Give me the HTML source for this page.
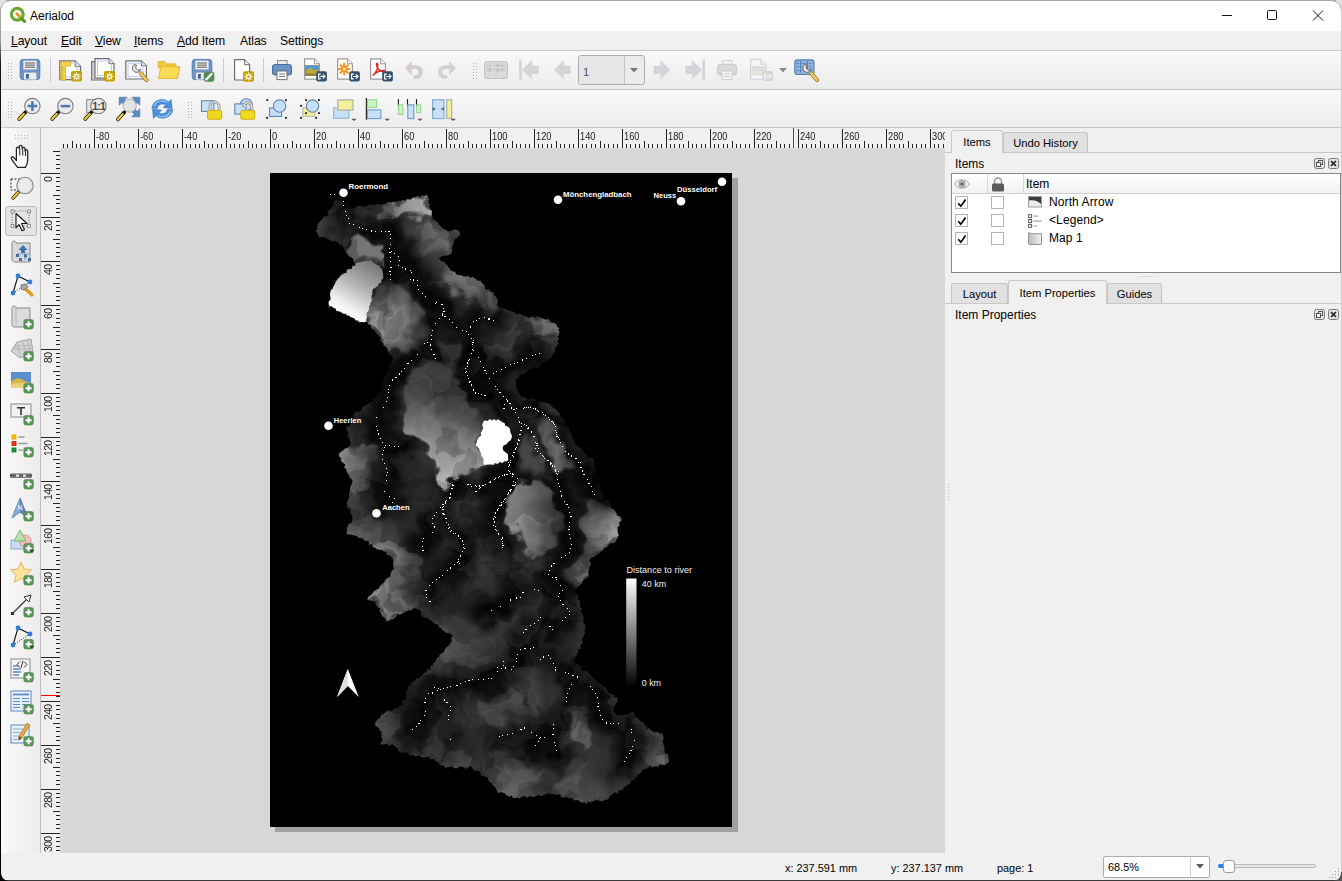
<!DOCTYPE html>
<html><head><meta charset="utf-8"><title>Aerialod</title>
<style>
html,body{margin:0;padding:0;}
body{width:1342px;height:881px;overflow:hidden;background:#f0f0f0;font-family:"Liberation Sans",sans-serif;font-size:12px;color:#000;position:relative;}
.abs{position:absolute;}
#title{left:0;top:0;width:1342px;height:31px;background:#fff;}
#title .name{left:30px;top:9px;font-size:12px;letter-spacing:0px;}
#menubar{left:0;top:31px;width:1342px;height:19px;background:#f0f0f0;}
#menubar span{position:absolute;top:3px;font-size:12.2px;letter-spacing:-0.1px;white-space:nowrap;}
#menubar u{text-decoration:underline;text-underline-offset:1px;}
.tb{left:1px;width:1341px;background:linear-gradient(#f9f9f9,#ececec);border-top:1px solid #c8c8c8;}
#tb1{top:50px;height:38px;}
#tb2{top:89px;height:38px;}
.grip{position:absolute;width:5px;height:17px;background-image:radial-gradient(circle,#b4b4b4 0.7px,transparent 0.9px);background-size:3px 3px;}
.sep{position:absolute;width:1px;height:24px;background:#c9c9c9;}
.ic{position:absolute;width:24px;height:24px;overflow:visible;}
#lefttb{left:1px;top:128px;width:39px;height:725px;background:linear-gradient(90deg,#f9f9f9,#ececec);border-right:1px solid #bdbdbd;}
#hruler{left:41px;top:128px;width:904px;height:20px;background:#f0f0f0;overflow:hidden;}
#vruler{left:41px;top:148px;width:19px;height:705px;background:#f0f0f0;overflow:hidden;}
#canvas{left:60px;top:148px;width:885px;height:705px;background:#d7d7d7;overflow:hidden;}
.rl{position:absolute;font-size:10.5px;color:#222;white-space:nowrap;}
#panel{left:945px;top:128px;width:397px;height:725px;background:#f0f0f0;}
.tab{position:absolute;box-sizing:border-box;border:1px solid #c4c4c4;border-bottom:none;border-radius:3px 3px 0 0;background:#e1e1e1;font-size:11.2px;text-align:center;white-space:nowrap;}
.cb{position:absolute;width:13px;height:13px;box-sizing:border-box;border:1px solid #b4b4b4;background:#fff;}
.ck{position:absolute;}
.tab.sel{background:#f0f0f0;border-color:#c9c9c9;}
#status{left:0;top:853px;width:1342px;height:28px;background:#f0f0f0;}
#status span{position:absolute;top:9px;font-size:10.9px;white-space:nowrap;}
</style></head><body>

<div id="title" class="abs">
<svg class="abs" style="left:8.7px;top:6.300px" width="18" height="18" viewBox="0 0 18 18"><circle cx="8.300" cy="8.300" r="5.900" fill="none" stroke="#6ea82e" stroke-width="3.200"/><path d="M10.500 10.500l5 4.800" stroke="#5b9a2d" stroke-width="3.200" stroke-linecap="round"/><path d="M7.600 7.600l3 2.900" stroke="#f08a1c" stroke-width="2.600" stroke-linecap="round"/><path d="M9.800 9.700l1.500 1.400" stroke="#c9c233" stroke-width="2.400"/></svg>
<div class="abs name">Aerialod</div>
<svg class="abs" style="left:1200px;top:0" width="142" height="31" viewBox="0 0 142 31"><path d="M22 15.500h10" stroke="#111" stroke-width="1"/><rect x="67.500" y="10.500" width="9" height="9" rx="1" fill="none" stroke="#111" stroke-width="1"/><path d="M113 10.500l10 10M123 10.500l-10 10" stroke="#111" stroke-width="1"/></svg>
</div>
<div id="menubar" class="abs">
<span style="left:11px"><u>L</u>ayout</span>
<span style="left:61px"><u>E</u>dit</span>
<span style="left:95px"><u>V</u>iew</span>
<span style="left:134px"><u>I</u>tems</span>
<span style="left:177px"><u>A</u>dd Item</span>
<span style="left:240px">Atlas</span>
<span style="left:280px">Settings</span>
</div>
<div id="tb1" class="abs tb">
<div class="grip" style="left:6px;top:11px"></div>
<svg class="ic" style="left:17px;top:7px" width="24" height="24" viewBox="0 0 24 24"><rect x="2.200" y="1.400" width="19.600" height="20.200" rx="2.800" fill="#6f93c4" stroke="#5580b5" stroke-width="1"/><rect x="5.400" y="2.800" width="13.200" height="8.600" fill="#f2f2f2" stroke="#b9c3d0" stroke-width="0.500"/><path d="M7 5h10M7 7.100h10M7 9.200h10" stroke="#555" stroke-width="1"/><rect x="6" y="14.600" width="12.400" height="7" fill="#ececec"/><rect x="8" y="16" width="2.800" height="4.600" fill="#3d5f8f"/></svg>
<svg class="ic" style="left:57px;top:7px" width="24" height="24" viewBox="0 0 24 24"><path d="M1.8 2.9H17.1L22.6 8.4V21.6H1.8z" fill="#fff" stroke="#6d6d6d" stroke-width="1.200" stroke-linejoin="round"/><path d="M17.1 2.9V8.4H22.6" fill="#f0f0f0" stroke="#6d6d6d" stroke-width="1"/><rect x="5" y="5" width="14" height="14" fill="none" stroke="#b4c0f2" stroke-width="0.900"/><path d="M3 4h9.500v4H7.500v14H3z" fill="#f7d548" stroke="#d9b416" stroke-width="0.900"/><path d="M3 10h2.500M3 12.500h2.500M3 15h2.500M3 17.500h2.500M3 20h2.500" stroke="#c4a000" stroke-width="0.800"/><rect x="13" y="13" width="11" height="10.6" rx="2" fill="#c4a000"/><path d="M18.5 14.3v8M14.3 18.5h8.4M15.6 15.6l5.800 5.800M21.4 15.6l-5.800 5.800" stroke="#fbf3cf" stroke-width="1.200"/><circle cx="18.5" cy="18.5" r="2.500" fill="#fbf3cf"/><circle cx="18.5" cy="18.5" r="1.100" fill="#c4a000"/></svg>
<svg class="ic" style="left:90px;top:7px" width="24" height="24" viewBox="0 0 24 24"><path d="M0.600 3.600h4v16h12v2.400h-16z" fill="#cfcfcf" stroke="#777" stroke-width="1.200" stroke-linejoin="round"/><path d="M4 0.6H18L23 5.6V20H4z" fill="#fff" stroke="#6d6d6d" stroke-width="1.200" stroke-linejoin="round"/><path d="M18 0.6V5.6H23" fill="#f0f0f0" stroke="#6d6d6d" stroke-width="1"/><rect x="6.500" y="3" width="14" height="14.500" fill="none" stroke="#b4c0f2" stroke-width="0.900"/><rect x="13" y="13" width="11" height="10.6" rx="2" fill="#c4a000"/><path d="M18.5 14.3v8M14.3 18.5h8.4M15.6 15.6l5.800 5.800M21.4 15.6l-5.800 5.800" stroke="#fbf3cf" stroke-width="1.200"/><circle cx="18.5" cy="18.5" r="2.500" fill="#fbf3cf"/><circle cx="18.5" cy="18.5" r="1.100" fill="#c4a000"/></svg>
<svg class="ic" style="left:123px;top:7px" width="24" height="24" viewBox="0 0 24 24"><path d="M1.8 2.9H17.4L22.4 7.9V21H1.8z" fill="#fff" stroke="#6d6d6d" stroke-width="1.200" stroke-linejoin="round"/><path d="M17.4 2.9V7.9H22.4" fill="#f0f0f0" stroke="#6d6d6d" stroke-width="1"/><rect x="4" y="5.200" width="15" height="13.500" fill="none" stroke="#b4c0f2" stroke-width="0.900"/><g transform="translate(2 1.5)"><path d="M20.500 20.500l-5.500-6.500" stroke="#8f6f1c" stroke-width="4.200" stroke-linecap="round"/><path d="M20.400 20.400l-5.500-6.500" stroke="#ecca66" stroke-width="2.800" stroke-linecap="round"/><path d="M8 5.200a4.300 4.300 0 1 0 6.800 4.600l-2.900 1-2.300-2.300 0.800-3a4.300 4.300 0 0 0-2.400-0.300z" fill="#e6e6e6" stroke="#666" stroke-width="1"/></g></svg>
<svg class="ic" style="left:156px;top:7px" width="24" height="24" viewBox="0 0 24 24"><path d="M1.200 3.500h6.500l1.800 2.400h9.300v4H1.200z" fill="#f3c93c" stroke="#dcb22a" stroke-width="0.900" stroke-linejoin="round"/><path d="M4 8.600h19l-2.600 12H1.400z" fill="#fcda55" stroke="#dcb22a" stroke-width="0.900" stroke-linejoin="round"/></svg>
<svg class="ic" style="left:189px;top:7px" width="24" height="24" viewBox="0 0 24 24"><rect x="2.200" y="1.400" width="19.600" height="20.200" rx="2.800" fill="#6f93c4" stroke="#5580b5" stroke-width="1"/><rect x="5.400" y="2.800" width="13.200" height="8.600" fill="#f2f2f2" stroke="#b9c3d0" stroke-width="0.500"/><path d="M7 5h10M7 7.100h10M7 9.200h10" stroke="#555" stroke-width="1"/><rect x="6" y="14.600" width="12.400" height="7" fill="#ececec"/><rect x="8" y="16" width="2.800" height="4.600" fill="#3d5f8f"/><rect x="14" y="14" width="10" height="9.600" rx="2" fill="#528f55" stroke="#4a7f4a" stroke-width="0.500"/><path d="M16.300 21.300l5.300-5.300" stroke="#fff" stroke-width="2.400" stroke-linecap="round"/></svg>
<svg class="ic" style="left:230px;top:7px" width="24" height="24" viewBox="0 0 24 24"><path d="M3.6 1.7H13.600000000000001L18.6 6.7V22H3.6z" fill="#fff" stroke="#6d6d6d" stroke-width="1.200" stroke-linejoin="round"/><path d="M13.600000000000001 1.7V6.7H18.6" fill="#f0f0f0" stroke="#6d6d6d" stroke-width="1"/><rect x="12" y="13.2" width="11" height="10.6" rx="2" fill="#c4a000"/><path d="M17.5 14.5v8M13.3 18.7h8.4M14.6 15.799999999999999l5.800 5.800M20.4 15.799999999999999l-5.800 5.800" stroke="#fbf3cf" stroke-width="1.200"/><circle cx="17.5" cy="18.7" r="2.500" fill="#fbf3cf"/><circle cx="17.5" cy="18.7" r="1.100" fill="#c4a000"/></svg>
<svg class="ic" style="left:269px;top:7px" width="24" height="24" viewBox="0 0 24 24"><rect x="7.600" y="2.500" width="9.400" height="6.500" fill="#ececec" stroke="#8a8a8a" stroke-width="1"/><rect x="2.500" y="6.500" width="19" height="10.500" rx="3" fill="#6b94c6" stroke="#44709f" stroke-width="1.100"/><path d="M6.500 17v-4.300h11V17" fill="#3f5f86" /><rect x="7" y="13" width="10" height="8.600" fill="#fbfbfb" stroke="#777" stroke-width="1"/><path d="M9 16h6M9 18.500h6" stroke="#777" stroke-width="1"/></svg>
<svg class="ic" style="left:302px;top:7px" width="24" height="24" viewBox="0 0 24 24"><path d="M1.6 0.8H11.399999999999999L16.4 5.8V21.2H1.6z" fill="#fff" stroke="#999" stroke-width="1.200" stroke-linejoin="round"/><path d="M11.399999999999999 0.8V5.8H16.4" fill="#f0f0f0" stroke="#999" stroke-width="1"/><rect x="2.400" y="7.500" width="13" height="10" fill="#4a9be0"/><path d="M2.400 17.500v-4.800l4.500-3 5 2.300 3.500-0.500v6z" fill="#bfa53c"/><path d="M2.400 17.500v-2h13v2z" fill="#9c8426"/><rect x="2.400" y="7.500" width="13" height="10" fill="none" stroke="#777" stroke-width="0.700"/><rect x="13.2" y="13.2" width="10.700" height="10.400" rx="2" fill="#34526b"/><path d="M17.799999999999997 16.2h-2.200v4.600h2.200M17.2 18.5h4.500M19.9 16.4l2.100 2.100-2.100 2.100" stroke="#fff" stroke-width="1.200" fill="none"/></svg>
<svg class="ic" style="left:335px;top:7px" width="24" height="24" viewBox="0 0 24 24"><path d="M1.6 0.8H11.399999999999999L16.4 5.8V21.2H1.6z" fill="#fff" stroke="#999" stroke-width="1.200" stroke-linejoin="round"/><path d="M11.399999999999999 0.8V5.8H16.4" fill="#f0f0f0" stroke="#999" stroke-width="1"/><path d="M8.200 5.500v11M3 11h10.400M4.500 7.200l7.400 7.600M11.900 7.200l-7.400 7.600" stroke="#f7931e" stroke-width="2" stroke-linecap="round"/><circle cx="8.200" cy="11" r="1.300" fill="#fff"/><rect x="13.2" y="13.2" width="10.700" height="10.400" rx="2" fill="#34526b"/><path d="M17.799999999999997 16.2h-2.200v4.600h2.200M17.2 18.5h4.500M19.9 16.4l2.100 2.100-2.100 2.100" stroke="#fff" stroke-width="1.200" fill="none"/></svg>
<svg class="ic" style="left:368px;top:7px" width="24" height="24" viewBox="0 0 24 24"><path d="M1.6 0.8H11.399999999999999L16.4 5.8V21.2H1.6z" fill="#fff" stroke="#999" stroke-width="1.200" stroke-linejoin="round"/><path d="M11.399999999999999 0.8V5.8H16.4" fill="#f0f0f0" stroke="#999" stroke-width="1"/><path d="M3.500 17.500c3.500-2.500 5.800-8 5.300-11.300-0.200-1.400-1.700-1-1.400 0.800 0.700 3.400 3.800 6.400 7 6.800 1.900 0.200 1.800-1.300 0-1.300-3.600 0-7.700 2-10.900 5z" fill="none" stroke="#e2231a" stroke-width="1.300"/><rect x="13.2" y="13.2" width="10.700" height="10.400" rx="2" fill="#34526b"/><path d="M17.799999999999997 16.2h-2.200v4.600h2.200M17.2 18.5h4.500M19.9 16.4l2.100 2.100-2.100 2.100" stroke="#fff" stroke-width="1.200" fill="none"/></svg>
<svg class="ic" style="left:401px;top:7px" width="24" height="24" viewBox="0 0 24 24"><path d="M3.100 10.100L9.800 3v4.200h3c5 0 8.200 2.400 8.200 6.800 0 4-3 6.800-7 6.800h-2.200v-3.600h1.700c2 0 3.200-1.300 3.200-3.100 0-2-1.500-3.200-4-3.200H9.800v6.600z" fill="#d5cec9"/></svg>
<svg class="ic" style="left:434px;top:7px" width="24" height="24" viewBox="0 0 24 24"><path d="M20.900 10.100L14.200 3v4.200h-3c-5 0-8.200 2.400-8.200 6.800 0 4 3 6.800 7 6.800h2.200v-3.600h-1.700c-2 0-3.200-1.300-3.200-3.100 0-2 1.500-3.200 4-3.200h2.900v6.600z" fill="#cfd3d1"/></svg>
<svg class="ic" style="left:483px;top:7px" width="24" height="24" viewBox="0 0 24 24"><rect x="0.600" y="3.500" width="22.800" height="17" rx="3" fill="#d6d7d9" stroke="#c2c4c7" stroke-width="1.100"/><path d="M3 8l3-1 3 1 1 3-2 1-1 4-2-3-2-2zM11 7l4-1 5 1 1 3-2 3-3 1-1 3-2-2-1-4z" fill="#c3c5c8"/><path d="M1 9.500h22M1 15h22M8 3.500v17M16 3.500v17" stroke="#e6e7e9" stroke-width="0.800"/></svg>
<svg class="ic" style="left:517px;top:7px" width="24" height="24" viewBox="0 0 24 24"><rect x="1.100" y="1.400" width="2.700" height="20.800" rx="0.500" fill="#d3d5d8"/><path d="M4 11.900l10.100-9.900v5.800h6.700v8.300h-6.700v5.400z" fill="#d3d5d8"/></svg>
<svg class="ic" style="left:550px;top:7px" width="24" height="24" viewBox="0 0 24 24"><path d="M3 11.900l9.900-9.900v5.800h6.700v8.300h-6.700v5.400z" fill="#d3d5d8"/></svg>
<svg class="ic" style="left:648px;top:7px" width="24" height="24" viewBox="0 0 24 24"><path d="M21.300 11.900l-9.900-9.900v5.800H4.700v8.300h6.700v5.400z" fill="#d3d5d8"/></svg>
<svg class="ic" style="left:681px;top:7px" width="24" height="24" viewBox="0 0 24 24"><rect x="20.300" y="1.400" width="2.700" height="20.800" rx="0.500" fill="#d3d5d8"/><path d="M20 11.900l-10.100-9.900v5.800H3.300v8.300h6.700v5.400z" fill="#d3d5d8"/></svg>
<svg class="ic" style="left:714px;top:7px" width="24" height="24" viewBox="0 0 24 24"><rect x="7.600" y="2.500" width="9.400" height="6.500" fill="#f1f1f1" stroke="#d0d1d3" stroke-width="1"/><rect x="2.500" y="6.500" width="19" height="10.500" rx="3" fill="#d6d8da" stroke="#cacbce" stroke-width="1.100"/><rect x="7" y="13" width="10" height="8.600" fill="#f4f4f4" stroke="#cfd0d2" stroke-width="1"/><path d="M9 16h6M9 18.500h6" stroke="#cfd0d2" stroke-width="1"/></svg>
<svg class="ic" style="left:748px;top:7px" width="24" height="24" viewBox="0 0 24 24"><path d="M1.6 1.3H11.8L16.8 6.3V21.2H1.6z" fill="#f6f6f6" stroke="#d4d5d7" stroke-width="1.200" stroke-linejoin="round"/><path d="M11.8 1.3V6.3H16.8" fill="#f0f0f0" stroke="#d4d5d7" stroke-width="1"/><rect x="2.400" y="8" width="13.600" height="9.500" fill="#dcdddf"/><path d="M2.400 17.500v-4l5-1.500 8.600 1.500v4z" fill="#e6e4dc"/><rect x="13.200" y="13" width="10.800" height="10" rx="2" fill="#d3d5d8"/><path d="M17.800 16h-2.200v4.600h2.200M17.200 18.300h4.500M19.900 16.200l2.100 2.100-2.100 2.100" stroke="#f6f6f6" stroke-width="1.200" fill="none"/></svg>
<svg class="ic" style="left:793px;top:7px" width="24" height="24" viewBox="0 0 24 24"><rect x="0.800" y="1.900" width="19.200" height="14.600" rx="2.500" fill="#8fb3dd" stroke="#4f7fb8" stroke-width="1.100"/><path d="M2.500 5.500h16M2.500 9h16M2.500 12.500h16M6.500 3v12.500M13.500 3v12.500" stroke="#3f6ea6" stroke-width="0.800" stroke-dasharray="2 1.200"/><g transform="translate(2.5 1.5)"><path d="M20.500 20.500l-5.500-6.500" stroke="#8f6f1c" stroke-width="4.200" stroke-linecap="round"/><path d="M20.400 20.400l-5.500-6.500" stroke="#ecca66" stroke-width="2.800" stroke-linecap="round"/><path d="M8 5.200a4.300 4.300 0 1 0 6.800 4.600l-2.900 1-2.300-2.300 0.800-3a4.300 4.300 0 0 0-2.400-0.300z" fill="#e6e6e6" stroke="#666" stroke-width="1"/></g></svg>
<div class="sep" style="left:49px;top:7px"></div>
<div class="sep" style="left:222px;top:7px"></div>
<div class="sep" style="left:262px;top:7px"></div>
<div class="grip" style="left:471px;top:11px"></div>
<div class="abs" style="left:577px;top:4px;width:67px;height:30px;box-sizing:border-box;border:1px solid #adadad;border-radius:3px;background:#ececec;"><div class="abs" style="left:0;top:0;width:45px;height:28px;border-right:1px solid #c2c2c2;background:#e6e6e6;border-radius:3px 0 0 3px"></div><span class="abs" style="left:4px;top:10px;font-size:11px;color:#555">1</span><svg class="abs" style="left:51px;top:12px" width="9" height="5"><path d="M0 0h8l-4 4.500z" fill="#777"/></svg></div>
<svg class="abs" style="left:778px;top:17px" width="9" height="5"><path d="M0 0h8l-4 4.500z" fill="#8a8a8a"/></svg>
</div>
<div id="tb2" class="abs tb">
<div class="grip" style="left:6px;top:11px"></div>
<svg class="ic" style="left:17px;top:7px" width="24" height="24" viewBox="0 0 24 24"><path d="M1.200 22l6.300-6.900" stroke="#111" stroke-width="3.600" stroke-linecap="round"/><path d="M1.200 22l4.600-5" stroke="#f4c531" stroke-width="2.300" stroke-linecap="round"/><circle cx="14.400" cy="9.100" r="7.700" fill="#ececec" stroke="#7c7c7c" stroke-width="1.100"/><path d="M14.400 4.300v9.600M9.600 9.100h9.600" stroke="#4a7ab5" stroke-width="2.500"/></svg>
<svg class="ic" style="left:50px;top:7px" width="24" height="24" viewBox="0 0 24 24"><path d="M1.200 22l6.300-6.900" stroke="#111" stroke-width="3.600" stroke-linecap="round"/><path d="M1.200 22l4.600-5" stroke="#f4c531" stroke-width="2.300" stroke-linecap="round"/><circle cx="14.400" cy="9.100" r="7.700" fill="#ececec" stroke="#7c7c7c" stroke-width="1.100"/><path d="M9.600 9.100h9.600" stroke="#4a7ab5" stroke-width="2.500"/></svg>
<svg class="ic" style="left:83px;top:7px" width="24" height="24" viewBox="0 0 24 24"><rect x="2.700" y="2.600" width="9" height="13" fill="#e3e3e3" stroke="#8a8a8a" stroke-width="1"/><path d="M1.200 22l6.300-6.900" stroke="#111" stroke-width="3.600" stroke-linecap="round"/><path d="M1.200 22l4.600-5" stroke="#f4c531" stroke-width="2.300" stroke-linecap="round"/><circle cx="14.400" cy="9.100" r="7.700" fill="#ececec" stroke="#7c7c7c" stroke-width="1.100"/><text x="14.600" y="12.600" font-size="10.500" font-weight="bold" text-anchor="middle" fill="#444" font-family="Liberation Sans, sans-serif" letter-spacing="-0.900">1:1</text></svg>
<svg class="ic" style="left:116px;top:7px" width="24" height="24" viewBox="0 0 24 24"><path d="M2.200 0.200h8l-2.600 2.600 3 3-2.800 2.800-3-3-2.600 2.600zM22.800 0.200v8l-2.600-2.600-3 3-2.800-2.800 3-3-2.600-2.600zM22.800 19.800h-8l2.600-2.600-3-3 2.800-2.800 3 3 2.600-2.600zM2.200 19.800" fill="#5b8ac4" stroke="#3f6ea8" stroke-width="0.600"/><circle cx="12.700" cy="8.600" r="6.600" fill="#e4e4e4" stroke="#a4a4a4" stroke-width="0.900"/><path d="M0.800 22.500l6.500-7.200" stroke="#111" stroke-width="3.600" stroke-linecap="round"/><path d="M0.800 22.500l4.800-5.300" stroke="#f4c531" stroke-width="2.300" stroke-linecap="round"/></svg>
<svg class="ic" style="left:149px;top:7px" width="24" height="24" viewBox="0 0 24 24"><path d="M1.800 11.300a10.200 10.200 0 0 1 16.800-6.300l2.500-2.600 1 9-9-0.800 2.500-2.600a5.200 5.200 0 0 0-8.300 3.300z" fill="#4a8fdc" stroke="#2e6fba" stroke-width="0.600"/><path d="M22.800 12.400a10.200 10.200 0 0 1-16.800 6.300l-2.500 2.600-1-9 9 0.800-2.500 2.600a5.200 5.200 0 0 0 8.300-3.300z" fill="#4a8fdc" stroke="#2e6fba" stroke-width="0.600"/><path d="M4 9.500a8.500 8.500 0 0 1 13-4M20.500 14.200a8.500 8.500 0 0 1-13 4" stroke="#9cc6f2" stroke-width="1.300" fill="none"/></svg>
<svg class="ic" style="left:198px;top:7px" width="24" height="24" viewBox="0 0 24 24"><rect x="2.500" y="3.800" width="12.500" height="10.600" fill="#c6e0f7" stroke="#5d86b4" stroke-width="1.100"/><path d="M11 13.500v-4a4.500 4.500 0 0 1 9 0v4" fill="none" stroke="#8d8d8d" stroke-width="2.800"/><path d="M11 13.500v-4a4.500 4.500 0 0 1 9 0v4" fill="none" stroke="#dcdcdc" stroke-width="1.400"/><rect x="8.600" y="13.600" width="14" height="8.600" rx="1.200" fill="#f1d821" stroke="#cfae08" stroke-width="1"/></svg>
<svg class="ic" style="left:231px;top:7px" width="24" height="24" viewBox="0 0 24 24"><circle cx="14.300" cy="7.700" r="6" fill="#c6e0f7" stroke="#5d86b4" stroke-width="1.100"/><rect x="2.800" y="6.900" width="11" height="10.200" fill="#c6e0f7" stroke="#5d86b4" stroke-width="1.100"/><path d="M20 13.500v-3.500a4.300 4.300 0 0 0-8.300-1.500l2.500 1" fill="none" stroke="#8d8d8d" stroke-width="2.800"/><path d="M20 13.500v-3.500a4.300 4.300 0 0 0-8.300-1.500l2.500 1" fill="none" stroke="#dcdcdc" stroke-width="1.400"/><rect x="8.800" y="13.600" width="14" height="8.600" rx="1.200" fill="#f1d821" stroke="#cfae08" stroke-width="1"/></svg>
<svg class="ic" style="left:264px;top:7px" width="24" height="24" viewBox="0 0 24 24"><rect x="4.600" y="10.900" width="12" height="8.500" fill="#c6e0f7" stroke="#5d86b4" stroke-width="1.100"/><circle cx="14.600" cy="9.100" r="6.200" fill="#c6e0f7" stroke="#5d86b4" stroke-width="1.100"/><path d="M1.300 2.200h1.800v1.800H1.300zM20 2.200h1.800v1.800H20zM1.300 20h1.800v1.800H1.300zM20 20h1.800v1.800H20z" fill="#111"/></svg>
<svg class="ic" style="left:297px;top:7px" width="24" height="24" viewBox="0 0 24 24"><rect x="4.900" y="10.900" width="12" height="8.300" fill="#f4f09a" stroke="#b9b68a" stroke-width="1"/><circle cx="14.500" cy="9.100" r="6.200" fill="#c6e0f7" stroke="#5d86b4" stroke-width="1.100"/><path d="M7.200 2.200h1.800v1.800H7.200zM20 2.200h1.800v1.800H20zM2.200 8h1.800v1.800H2.200zM7.200 15.200h1.800v1.800H7.200zM20 15.200h1.800v1.800H20zM2.200 20h1.800v1.800H2.200zM17.200 20h1.800v1.800h-1.800z" fill="#111"/></svg>
<svg class="ic" style="left:330px;top:7px" width="24" height="24" viewBox="0 0 24 24"><rect x="2.700" y="10.900" width="15.200" height="10.300" fill="#c6e0f7" stroke="#8fb0d4" stroke-width="1.100"/><rect x="6.800" y="2.900" width="15.200" height="10.200" fill="#f4f09a" stroke="#a9a9a0" stroke-width="1.100"/><path d="M20.300 21.800h5.400l-2.700 2.300z" fill="#555"/></svg>
<svg class="ic" style="left:363px;top:7px" width="24" height="24" viewBox="0 0 24 24"><path d="M2.400 1.100v21.600" stroke="#222" stroke-width="1.200"/><rect x="3.400" y="2.800" width="9.300" height="7.600" fill="#c8f5c0" stroke="#97cf90" stroke-width="1"/><rect x="3.400" y="12.900" width="13.500" height="8.700" fill="#c6e0f7" stroke="#6f9bc8" stroke-width="1.100"/><path d="M20.500 21.800h5.400l-2.700 2.300z" fill="#555"/></svg>
<svg class="ic" style="left:396px;top:7px" width="24" height="24" viewBox="0 0 24 24"><path d="M1.400 2v7.800M10.500 2v7.800M19.500 2v7.800" stroke="#222" stroke-width="1.100"/><rect x="1.600" y="7.800" width="4.300" height="9.700" fill="#c8f5c0" stroke="#97cf90" stroke-width="1"/><rect x="10.800" y="7.800" width="6" height="13.800" fill="#c6e0f7" stroke="#6f9bc8" stroke-width="1.100"/><rect x="19.700" y="7.800" width="4" height="7.800" fill="#c8f5c0" stroke="#97cf90" stroke-width="1"/><path d="M20.300 21.800h5.400l-2.700 2.300z" fill="#555"/></svg>
<svg class="ic" style="left:429px;top:7px" width="24" height="24" viewBox="0 0 24 24"><rect x="2.600" y="2.800" width="11.400" height="18.800" fill="#c6e0f7" stroke="#7fa8d2" stroke-width="1.100"/><path d="M2.600 10l3.200 2-3.200 2zM14 10l-3.200 2 3.200 2z" fill="#5c6d80"/><path d="M2.600 12h2M14 12h-2" stroke="#5c6d80" stroke-width="0.800"/><rect x="16.700" y="2.800" width="5" height="18.500" fill="#f4f09a" stroke="#a9a9a0" stroke-width="1.100"/><path d="M20.300 21.800h5.700l-2.850 2.300z" fill="#555"/></svg>
<div class="grip" style="left:186px;top:11px"></div>
</div>
<div class="abs" style="left:0;top:127px;width:1342px;height:1px;background:#c8c8c8"></div>
<div id="lefttb" class="abs">
<div class="abs" style="left:13px;top:6px;width:14px;height:5px;background-image:radial-gradient(circle,#b4b4b4 0.7px,transparent 0.9px);background-size:3px 3px;"></div>
<div class="abs" style="left:4px;top:78px;width:32px;height:30px;box-sizing:border-box;border:1px solid #b9b9b9;border-radius:3px;background:#e4e4e4"></div>
<svg class="ic" style="left:9px;top:16px" width="24" height="24" viewBox="0 0 24 24"><g transform="translate(-1.5 -1.5) scale(1.13)"><path d="M8 22c-2-3-5-6-5.5-8-0.3-1.3 1.5-1.8 2.5-0.500l2 2.500V5.500c0-1.8 2.5-1.8 2.5 0V4c0-1.8 2.6-1.8 2.6 0v1.500c0-1.6 2.5-1.6 2.5 0v2c0-1.5 2.4-1.5 2.4 0v8c0 3-1 4.5-2 6.500z" fill="#fff" stroke="#222" stroke-width="1.1" stroke-linejoin="round"/><path d="M10 5.500v6M12.6 5.500v6M15.1 7v5" stroke="#222" stroke-width="0.9"/></g></svg>
<svg class="ic" style="left:9px;top:48px" width="24" height="24" viewBox="0 0 24 24"><rect x="1" y="3" width="11" height="11" fill="none" stroke="#222" stroke-width="1" stroke-dasharray="2 1.5"/><path d="M3 22l6-6.5" stroke="#222" stroke-width="3.4" stroke-linecap="round"/><path d="M3 22l5-5.4" stroke="#f2c230" stroke-width="2.2" stroke-linecap="round"/><circle cx="15" cy="9.5" r="8.200" fill="#e2e2e2" stroke="#8a8a8a" stroke-width="1.100"/><circle cx="15" cy="9.500" r="6.500" fill="#ececec"/></svg>
<svg class="ic" style="left:9px;top:81px" width="24" height="24" viewBox="0 0 24 24"><rect x="2" y="2" width="17" height="15" fill="none" stroke="#555" stroke-width="0.9" stroke-dasharray="1 1.6"/><path d="M1 1h3v3H1zM17.5 1h3v3h-3zM1 15.500h3v3H1zM17.5 15.500h3v3h-3z" fill="#f4f4f4" stroke="#666" stroke-width="0.7"/><path d="M6 4.500l11 10h-5.500l3 6-2.5 1.2-3-6.2-3 3.500z" fill="#fff" stroke="#111" stroke-width="1.1" stroke-linejoin="round"/></svg>
<svg class="ic" style="left:9px;top:112px" width="24" height="24" viewBox="0 0 24 24"><path d="M4 1c-2 0-2 2-2 3v15c0 2 1 3 3 3h15V3H6c0-1-1-2-2-2z" fill="#d9d9d9" stroke="#888" stroke-width="1"/><path d="M13 5l4.5 5h-2.500v3h-4v-3h-2.500z" fill="#3e70b0"/><path d="M9 18h3v3H9zM14 14.500h3v3h-3zM18 18h3v3h-3zM6 14h3v3H6z" fill="#3e70b0"/><path d="M7 14h8v6M15 14h5" stroke="#3e70b0" stroke-width="0.8" fill="none" stroke-dasharray="1.5 1"/></svg>
<svg class="ic" style="left:9px;top:145px" width="24" height="24" viewBox="0 0 24 24"><path d="M8 3l12 6M8 3l-5 17" stroke="#111" stroke-width="1.1"/><path d="M3 20l17-11" stroke="#333" stroke-width="0.9" stroke-dasharray="1.2 1.2"/><path d="M22 22l-7-6.5" stroke="#e39a12" stroke-width="3.2" stroke-linecap="round"/><path d="M11 12l5-1 2 3-4 3-3-1z" fill="#aaa" stroke="#666" stroke-width="0.8"/><circle cx="8" cy="3" r="2.4" fill="#2f7de1"/><circle cx="20" cy="9" r="2.4" fill="#2f7de1"/><circle cx="3" cy="20" r="2.4" fill="#2f7de1"/></svg>
<svg class="ic" style="left:9px;top:177px" width="24" height="24" viewBox="0 0 24 24"><path d="M4 1c-2 0-2 2-2 3v15c0 2 1 3 3 3h15V3H6c0-1-1-2-2-2z" fill="#dcdcdc" stroke="#8a8a8a" stroke-width="1"/><path d="M6 3v17" stroke="#aaa" stroke-width="0.8"/><rect x="13.800" y="14.400" width="9.600" height="9.600" rx="2" fill="#5b955b" stroke="#4f844f" stroke-width="0.600"/><path d="M18.600 16.200v6M15.600 19.200h6" stroke="#fff" stroke-width="1.900"/></svg>
<svg class="ic" style="left:9px;top:209px" width="24" height="24" viewBox="0 0 24 24"><path d="M1 14l6-9 14-3 2 13-13 6z" fill="#d4d4d4" stroke="#9a9a9a" stroke-width="0.9"/><path d="M4 9.500l18-1.500M2.5 12l20 0M7 5l4 16M12 4l5 14M17 3l3 13" stroke="#aaa" stroke-width="0.7" fill="none"/><rect x="13.800" y="14.400" width="9.600" height="9.600" rx="2" fill="#5b955b" stroke="#4f844f" stroke-width="0.600"/><path d="M18.600 16.200v6M15.600 19.200h6" stroke="#fff" stroke-width="1.900"/></svg>
<svg class="ic" style="left:9px;top:241px" width="24" height="24" viewBox="0 0 24 24"><rect x="1" y="3" width="20" height="16" fill="#5d8fd0"/><path d="M1 19v-6c4-4 8-5 12-2 3 2 6 3 8 3v5z" fill="#d6b64a"/><path d="M1 19v-3c5-3 12-3 20 0v3z" fill="#e8cf7a"/><rect x="13.800" y="14.400" width="9.600" height="9.600" rx="2" fill="#5b955b" stroke="#4f844f" stroke-width="0.600"/><path d="M18.600 16.200v6M15.600 19.200h6" stroke="#fff" stroke-width="1.900"/></svg>
<svg class="ic" style="left:9px;top:273px" width="24" height="24" viewBox="0 0 24 24"><rect x="1" y="3" width="20" height="13" fill="#f2f2f2" stroke="#888" stroke-width="1"/><path d="M7 6h8v1.500h-3.200V14h-1.600V7.500H7z" fill="#333"/><rect x="13.800" y="14.400" width="9.600" height="9.600" rx="2" fill="#5b955b" stroke="#4f844f" stroke-width="0.600"/><path d="M18.600 16.200v6M15.600 19.200h6" stroke="#fff" stroke-width="1.900"/></svg>
<svg class="ic" style="left:9px;top:305px" width="24" height="24" viewBox="0 0 24 24"><rect x="2" y="2" width="4" height="4" fill="#f5c211" stroke="#e09b00" stroke-width="0.8"/><rect x="2" y="8.5" width="4" height="4" fill="#e5391f" stroke="#c01c00" stroke-width="0.8"/><rect x="2" y="15" width="4" height="4" fill="#1a9a4a" stroke="#0d6e30" stroke-width="0.8"/><path d="M8.5 4h6M8.5 10.500h9M8.5 17h4" stroke="#999" stroke-width="1.4"/><rect x="13.800" y="14.400" width="9.600" height="9.600" rx="2" fill="#5b955b" stroke="#4f844f" stroke-width="0.600"/><path d="M18.600 16.200v6M15.600 19.200h6" stroke="#fff" stroke-width="1.900"/></svg>
<svg class="ic" style="left:9px;top:337px" width="24" height="24" viewBox="0 0 24 24"><rect x="0.500" y="9" width="21" height="3.200" rx="1" fill="#e8e8e8" stroke="#555" stroke-width="1.100"/><rect x="1" y="9.500" width="5" height="2.200" fill="#555"/><rect x="9" y="9.500" width="4" height="2.200" fill="#555"/><rect x="16" y="9.500" width="5" height="2.200" fill="#555"/><rect x="13.800" y="14.400" width="9.600" height="9.600" rx="2" fill="#5b955b" stroke="#4f844f" stroke-width="0.600"/><path d="M18.600 16.200v6M15.600 19.200h6" stroke="#fff" stroke-width="1.900"/></svg>
<svg class="ic" style="left:9px;top:369px" width="24" height="24" viewBox="0 0 24 24"><path d="M10 1l8 20-8-6-8 6z" fill="#5a86bd" stroke="#3b6496" stroke-width="0.8"/><path d="M10 1v14l-8 6z" fill="#86a9d4"/><text x="10" y="13" font-size="7" fill="#dfe9f5" text-anchor="middle" font-family="Liberation Sans, sans-serif" font-weight="bold">N</text><rect x="13.800" y="14.400" width="9.600" height="9.600" rx="2" fill="#5b955b" stroke="#4f844f" stroke-width="0.600"/><path d="M18.600 16.200v6M15.600 19.200h6" stroke="#fff" stroke-width="1.900"/></svg>
<svg class="ic" style="left:9px;top:401px" width="24" height="24" viewBox="0 0 24 24"><rect x="1" y="11" width="13" height="9" fill="#c9dcf3" stroke="#7ea6d6" stroke-width="0.9"/><circle cx="15" cy="12" r="6" fill="#f4bcbc" stroke="#e08a8a" stroke-width="0.9"/><path d="M10 1l6 11H4z" fill="#b5e3ae" stroke="#6fb36a" stroke-width="0.9"/><rect x="13.800" y="14.400" width="9.600" height="9.600" rx="2" fill="#5b955b" stroke="#4f844f" stroke-width="0.600"/><path d="M18.600 16.200v6M15.600 19.200h6" stroke="#fff" stroke-width="1.900"/><path d="M20 21h4l-2 2.500z" fill="#333"/></svg>
<svg class="ic" style="left:9px;top:433px" width="24" height="24" viewBox="0 0 24 24"><path d="M11 1l3 7 7.5 0.8-5.6 5 1.7 7.5-6.6-4-6.6 4 1.7-7.5-5.6-5L8 8z" fill="#fde3a0" stroke="#eab35a" stroke-width="1"/><rect x="13.800" y="14.400" width="9.600" height="9.600" rx="2" fill="#5b955b" stroke="#4f844f" stroke-width="0.600"/><path d="M18.600 16.200v6M15.600 19.200h6" stroke="#fff" stroke-width="1.900"/></svg>
<svg class="ic" style="left:9px;top:465px" width="24" height="24" viewBox="0 0 24 24"><path d="M3 20L19 4" stroke="#333" stroke-width="1.1"/><path d="M21 2l-2 7-5-5z" fill="#fff" stroke="#333" stroke-width="1"/><rect x="1" y="19" width="3" height="3" fill="#333"/><rect x="13.800" y="14.400" width="9.600" height="9.600" rx="2" fill="#5b955b" stroke="#4f844f" stroke-width="0.600"/><path d="M18.600 16.200v6M15.600 19.200h6" stroke="#fff" stroke-width="1.900"/></svg>
<svg class="ic" style="left:9px;top:497px" width="24" height="24" viewBox="0 0 24 24"><path d="M8 3l12 6M8 3l-5 17" stroke="#111" stroke-width="1.1"/><path d="M3 20l17-11" stroke="#333" stroke-width="0.9" stroke-dasharray="1.2 1.2"/><circle cx="8" cy="3" r="2.4" fill="#2f7de1"/><circle cx="20" cy="9" r="2.4" fill="#2f7de1"/><circle cx="3" cy="20" r="2.4" fill="#2f7de1"/><rect x="13.800" y="14.400" width="9.600" height="9.600" rx="2" fill="#5b955b" stroke="#4f844f" stroke-width="0.600"/><path d="M18.600 16.200v6M15.600 19.200h6" stroke="#fff" stroke-width="1.900"/><path d="M20 21h4l-2 2.500z" fill="#333"/></svg>
<svg class="ic" style="left:9px;top:530px" width="24" height="24" viewBox="0 0 24 24"><rect x="1" y="1" width="19" height="19" fill="#f6f6f6" stroke="#888" stroke-width="1"/><path d="M3 8h5M3 11h8M3 14h8M3 17h6" stroke="#5d8cc4" stroke-width="1.3"/><path d="M10 3.500l-3 3 3 3M14 3.500l3 3-3 3M13 3l-2 7" stroke="#333" stroke-width="1" fill="none"/><rect x="13.800" y="14.400" width="9.600" height="9.600" rx="2" fill="#5b955b" stroke="#4f844f" stroke-width="0.600"/><path d="M18.600 16.200v6M15.600 19.200h6" stroke="#fff" stroke-width="1.900"/></svg>
<svg class="ic" style="left:9px;top:562px" width="24" height="24" viewBox="0 0 24 24"><rect x="1" y="1" width="20" height="20" fill="#e9f0fa" stroke="#5d8cc4" stroke-width="1"/><path d="M3 4.500h16" stroke="#5d8cc4" stroke-width="1.8"/><path d="M3 8.500h7M12 8.500h7M3 11.500h7M12 11.500h7M3 14.500h7M12 14.500h7M3 17.500h7" stroke="#5d8cc4" stroke-width="1.1"/><rect x="13.800" y="14.400" width="9.600" height="9.600" rx="2" fill="#5b955b" stroke="#4f844f" stroke-width="0.600"/><path d="M18.600 16.200v6M15.600 19.200h6" stroke="#fff" stroke-width="1.900"/></svg>
<svg class="ic" style="left:9px;top:594px" width="24" height="24" viewBox="0 0 24 24"><rect x="1" y="3" width="18" height="18" fill="#e9f0fa" stroke="#5d8cc4" stroke-width="1"/><path d="M3 7h10M3 10.500h8M3 14h6M3 17.500h8" stroke="#8fb0dc" stroke-width="1.1"/><path d="M17 1l3 2-8 13-3.5 2 0.5-4z" fill="#e9a646" stroke="#b8791f" stroke-width="0.7"/><path d="M9 14l3 2-3.5 2z" fill="#555"/><rect x="13.800" y="14.400" width="9.600" height="9.600" rx="2" fill="#5b955b" stroke="#4f844f" stroke-width="0.600"/><path d="M18.600 16.200v6M15.600 19.200h6" stroke="#fff" stroke-width="1.900"/></svg>
</div>
<div id="hruler" class="abs"><svg class="abs" style="left:0;top:0" width="904" height="20">
<path d="M22.5 16v4M26.5 16v4M35.5 16v4M39.5 16v4M44.5 16v4M48.5 16v4M57.5 16v4M61.5 16v4M66.5 16v4M70.5 16v4M79.5 16v4M83.5 16v4M88.5 16v4M92.5 16v4M101.5 16v4M105.5 16v4M110.5 16v4M114.5 16v4M123.5 16v4M127.5 16v4M132.5 16v4M136.5 16v4M145.5 16v4M149.5 16v4M154.5 16v4M158.5 16v4M167.5 16v4M171.5 16v4M176.5 16v4M180.5 16v4M189.5 16v4M193.5 16v4M198.5 16v4M202.5 16v4M211.5 16v4M215.5 16v4M220.5 16v4M224.5 16v4M233.5 16v4M237.5 16v4M242.5 16v4M246.5 16v4M255.5 16v4M259.5 16v4M264.5 16v4M268.5 16v4M277.5 16v4M281.5 16v4M286.5 16v4M290.5 16v4M299.5 16v4M303.5 16v4M308.5 16v4M312.5 16v4M321.5 16v4M325.5 16v4M330.5 16v4M334.5 16v4M343.5 16v4M347.5 16v4M352.5 16v4M356.5 16v4M365.5 16v4M369.5 16v4M374.5 16v4M378.5 16v4M387.5 16v4M391.5 16v4M396.5 16v4M400.5 16v4M409.5 16v4M413.5 16v4M418.5 16v4M422.5 16v4M431.5 16v4M435.5 16v4M440.5 16v4M444.5 16v4M453.5 16v4M457.5 16v4M462.5 16v4M466.5 16v4M475.5 16v4M479.5 16v4M484.5 16v4M488.5 16v4M497.5 16v4M501.5 16v4M506.5 16v4M510.5 16v4M519.5 16v4M523.5 16v4M528.5 16v4M532.5 16v4M541.5 16v4M545.5 16v4M550.5 16v4M554.5 16v4M563.5 16v4M567.5 16v4M572.5 16v4M576.5 16v4M585.5 16v4M589.5 16v4M594.5 16v4M598.5 16v4M607.5 16v4M611.5 16v4M616.5 16v4M620.5 16v4M629.5 16v4M633.5 16v4M638.5 16v4M642.5 16v4M651.5 16v4M655.5 16v4M660.5 16v4M664.5 16v4M673.5 16v4M677.5 16v4M682.5 16v4M686.5 16v4M695.5 16v4M699.5 16v4M704.5 16v4M708.5 16v4M717.5 16v4M721.5 16v4M726.5 16v4M730.5 16v4M739.5 16v4M743.5 16v4M748.5 16v4M752.5 16v4M761.5 16v4M765.5 16v4M770.5 16v4M774.5 16v4M783.5 16v4M787.5 16v4M792.5 16v4M796.5 16v4M805.5 16v4M809.5 16v4M814.5 16v4M818.5 16v4M827.5 16v4M831.5 16v4M836.5 16v4M840.5 16v4M849.5 16v4M853.5 16v4M858.5 16v4M862.5 16v4M871.5 16v4M875.5 16v4M880.5 16v4M884.5 16v4M893.5 16v4M897.5 16v4M902.5 16v4M31.5 13v7M75.5 13v7M119.5 13v7M163.5 13v7M207.5 13v7M251.5 13v7M295.5 13v7M339.5 13v7M383.5 13v7M427.5 13v7M471.5 13v7M515.5 13v7M559.5 13v7M603.5 13v7M647.5 13v7M691.5 13v7M735.5 13v7M779.5 13v7M823.5 13v7M867.5 13v7M53.5 1v19M97.5 1v19M141.5 1v19M185.5 1v19M229.5 1v19M273.5 1v19M317.5 1v19M361.5 1v19M405.5 1v19M449.5 1v19M493.5 1v19M537.5 1v19M581.5 1v19M625.5 1v19M669.5 1v19M713.5 1v19M757.5 1v19M801.5 1v19M845.5 1v19M889.5 1v19" stroke="#222" stroke-width="1" shape-rendering="crispEdges"/>
<path d="M752.5 0v20" stroke="#f00" stroke-width="1" shape-rendering="crispEdges"/>
</svg>
<span class="rl" style="left:55px;top:2px;transform:scaleX(0.88);transform-origin:0 0">-80</span>
<span class="rl" style="left:99px;top:2px;transform:scaleX(0.88);transform-origin:0 0">-60</span>
<span class="rl" style="left:143px;top:2px;transform:scaleX(0.88);transform-origin:0 0">-40</span>
<span class="rl" style="left:187px;top:2px;transform:scaleX(0.88);transform-origin:0 0">-20</span>
<span class="rl" style="left:231px;top:2px;transform:scaleX(0.88);transform-origin:0 0">0</span>
<span class="rl" style="left:275px;top:2px;transform:scaleX(0.88);transform-origin:0 0">20</span>
<span class="rl" style="left:319px;top:2px;transform:scaleX(0.88);transform-origin:0 0">40</span>
<span class="rl" style="left:363px;top:2px;transform:scaleX(0.88);transform-origin:0 0">60</span>
<span class="rl" style="left:407px;top:2px;transform:scaleX(0.88);transform-origin:0 0">80</span>
<span class="rl" style="left:451px;top:2px;transform:scaleX(0.88);transform-origin:0 0">100</span>
<span class="rl" style="left:495px;top:2px;transform:scaleX(0.88);transform-origin:0 0">120</span>
<span class="rl" style="left:539px;top:2px;transform:scaleX(0.88);transform-origin:0 0">140</span>
<span class="rl" style="left:583px;top:2px;transform:scaleX(0.88);transform-origin:0 0">160</span>
<span class="rl" style="left:627px;top:2px;transform:scaleX(0.88);transform-origin:0 0">180</span>
<span class="rl" style="left:671px;top:2px;transform:scaleX(0.88);transform-origin:0 0">200</span>
<span class="rl" style="left:715px;top:2px;transform:scaleX(0.88);transform-origin:0 0">220</span>
<span class="rl" style="left:759px;top:2px;transform:scaleX(0.88);transform-origin:0 0">240</span>
<span class="rl" style="left:803px;top:2px;transform:scaleX(0.88);transform-origin:0 0">260</span>
<span class="rl" style="left:847px;top:2px;transform:scaleX(0.88);transform-origin:0 0">280</span>
<span class="rl" style="left:891px;top:2px;transform:scaleX(0.88);transform-origin:0 0">300</span>
</div>
<div id="vruler" class="abs"><svg class="abs" style="left:0;top:0" width="19" height="705">
<path d="M15 7.5h4M15 11.5h4M15 16.5h4M15 20.5h4M15 29.5h4M15 33.5h4M15 38.5h4M15 42.5h4M15 51.5h4M15 55.5h4M15 60.5h4M15 64.5h4M15 73.5h4M15 77.5h4M15 82.5h4M15 86.5h4M15 95.5h4M15 99.5h4M15 104.5h4M15 108.5h4M15 117.5h4M15 121.5h4M15 126.5h4M15 130.5h4M15 139.5h4M15 143.5h4M15 148.5h4M15 152.5h4M15 161.5h4M15 165.5h4M15 170.5h4M15 174.5h4M15 183.5h4M15 187.5h4M15 192.5h4M15 196.5h4M15 205.5h4M15 209.5h4M15 214.5h4M15 218.5h4M15 227.5h4M15 231.5h4M15 236.5h4M15 240.5h4M15 249.5h4M15 253.5h4M15 258.5h4M15 262.5h4M15 271.5h4M15 275.5h4M15 280.5h4M15 284.5h4M15 293.5h4M15 297.5h4M15 302.5h4M15 306.5h4M15 315.5h4M15 319.5h4M15 324.5h4M15 328.5h4M15 337.5h4M15 341.5h4M15 346.5h4M15 350.5h4M15 359.5h4M15 363.5h4M15 368.5h4M15 372.5h4M15 381.5h4M15 385.5h4M15 390.5h4M15 394.5h4M15 403.5h4M15 407.5h4M15 412.5h4M15 416.5h4M15 425.5h4M15 429.5h4M15 434.5h4M15 438.5h4M15 447.5h4M15 451.5h4M15 456.5h4M15 460.5h4M15 469.5h4M15 473.5h4M15 478.5h4M15 482.5h4M15 491.5h4M15 495.5h4M15 500.5h4M15 504.5h4M15 513.5h4M15 517.5h4M15 522.5h4M15 526.5h4M15 535.5h4M15 539.5h4M15 544.5h4M15 548.5h4M15 557.5h4M15 561.5h4M15 566.5h4M15 570.5h4M15 579.5h4M15 583.5h4M15 588.5h4M15 592.5h4M15 601.5h4M15 605.5h4M15 610.5h4M15 614.5h4M15 623.5h4M15 627.5h4M15 632.5h4M15 636.5h4M15 645.5h4M15 649.5h4M15 654.5h4M15 658.5h4M15 667.5h4M15 671.5h4M15 676.5h4M15 680.5h4M15 689.5h4M15 693.5h4M15 698.5h4M15 702.5h4M12 3.5h7M12 47.5h7M12 91.5h7M12 135.5h7M12 179.5h7M12 223.5h7M12 267.5h7M12 311.5h7M12 355.5h7M12 399.5h7M12 443.5h7M12 487.5h7M12 531.5h7M12 575.5h7M12 619.5h7M12 663.5h7M0 25.5h19M0 69.5h19M0 113.5h19M0 157.5h19M0 201.5h19M0 245.5h19M0 289.5h19M0 333.5h19M0 377.5h19M0 421.5h19M0 465.5h19M0 509.5h19M0 553.5h19M0 597.5h19M0 641.5h19M0 685.5h19" stroke="#222" stroke-width="1" shape-rendering="crispEdges"/>
<path d="M0 547.5h19" stroke="#f00" stroke-width="1" shape-rendering="crispEdges"/>
</svg>
<span class="rl" style="left:1px;top:29px;width:12px;height:30px;writing-mode:vertical-rl;transform:rotate(180deg);transform-origin:center;text-align:right;line-height:12px;letter-spacing:-0.7px">0</span>
<span class="rl" style="left:1px;top:73px;width:12px;height:30px;writing-mode:vertical-rl;transform:rotate(180deg);transform-origin:center;text-align:right;line-height:12px;letter-spacing:-0.7px">20</span>
<span class="rl" style="left:1px;top:117px;width:12px;height:30px;writing-mode:vertical-rl;transform:rotate(180deg);transform-origin:center;text-align:right;line-height:12px;letter-spacing:-0.7px">40</span>
<span class="rl" style="left:1px;top:161px;width:12px;height:30px;writing-mode:vertical-rl;transform:rotate(180deg);transform-origin:center;text-align:right;line-height:12px;letter-spacing:-0.7px">60</span>
<span class="rl" style="left:1px;top:205px;width:12px;height:30px;writing-mode:vertical-rl;transform:rotate(180deg);transform-origin:center;text-align:right;line-height:12px;letter-spacing:-0.7px">80</span>
<span class="rl" style="left:1px;top:249px;width:12px;height:30px;writing-mode:vertical-rl;transform:rotate(180deg);transform-origin:center;text-align:right;line-height:12px;letter-spacing:-0.7px">100</span>
<span class="rl" style="left:1px;top:293px;width:12px;height:30px;writing-mode:vertical-rl;transform:rotate(180deg);transform-origin:center;text-align:right;line-height:12px;letter-spacing:-0.7px">120</span>
<span class="rl" style="left:1px;top:337px;width:12px;height:30px;writing-mode:vertical-rl;transform:rotate(180deg);transform-origin:center;text-align:right;line-height:12px;letter-spacing:-0.7px">140</span>
<span class="rl" style="left:1px;top:381px;width:12px;height:30px;writing-mode:vertical-rl;transform:rotate(180deg);transform-origin:center;text-align:right;line-height:12px;letter-spacing:-0.7px">160</span>
<span class="rl" style="left:1px;top:425px;width:12px;height:30px;writing-mode:vertical-rl;transform:rotate(180deg);transform-origin:center;text-align:right;line-height:12px;letter-spacing:-0.7px">180</span>
<span class="rl" style="left:1px;top:469px;width:12px;height:30px;writing-mode:vertical-rl;transform:rotate(180deg);transform-origin:center;text-align:right;line-height:12px;letter-spacing:-0.7px">200</span>
<span class="rl" style="left:1px;top:513px;width:12px;height:30px;writing-mode:vertical-rl;transform:rotate(180deg);transform-origin:center;text-align:right;line-height:12px;letter-spacing:-0.7px">220</span>
<span class="rl" style="left:1px;top:557px;width:12px;height:30px;writing-mode:vertical-rl;transform:rotate(180deg);transform-origin:center;text-align:right;line-height:12px;letter-spacing:-0.7px">240</span>
<span class="rl" style="left:1px;top:601px;width:12px;height:30px;writing-mode:vertical-rl;transform:rotate(180deg);transform-origin:center;text-align:right;line-height:12px;letter-spacing:-0.7px">260</span>
<span class="rl" style="left:1px;top:645px;width:12px;height:30px;writing-mode:vertical-rl;transform:rotate(180deg);transform-origin:center;text-align:right;line-height:12px;letter-spacing:-0.7px">280</span>
<span class="rl" style="left:1px;top:689px;width:12px;height:30px;writing-mode:vertical-rl;transform:rotate(180deg);transform-origin:center;text-align:right;line-height:12px;letter-spacing:-0.7px">300</span>
</div>
<div class="abs" style="left:41px;top:128px;width:19px;height:20px;background:#f0f0f0"></div>
<div id="canvas" class="abs">
<div class="abs" style="left:215px;top:30px;width:463px;height:654px;background:#a0a0a0"></div>
<svg class="abs" style="left:210px;top:25px" width="462" height="654" viewBox="270 173 462 654">
<defs>
<clipPath id="cm"><path d="M339.5 196.6L342.3 197.4L343.8 199.2L344.3 200.7L346.1 201.5L348.0 201.5L350.0 206.1L350.2 207.0L353.7 208.8L355.6 207.0L358.7 205.8L360.5 206.2L360.5 205.4L363.0 207.1L364.7 206.2L368.0 205.4L369.8 204.3L370.5 204.4L374.2 204.8L375.3 205.0L377.7 203.8L380.7 204.6L381.2 203.9L384.0 204.4L386.6 202.4L389.4 201.6L389.9 203.1L391.2 202.0L392.9 202.1L397.0 201.5L399.3 200.5L400.8 200.9L402.6 200.0L405.3 200.9L406.4 199.6L407.2 199.2L410.9 199.5L413.5 197.0L414.3 197.8L415.3 197.0L417.8 195.7L419.5 197.3L422.1 195.2L425.2 196.2L426.7 194.4L428.4 197.6L429.4 199.6L428.3 200.4L428.8 203.8L430.9 203.7L429.0 206.0L430.2 209.1L432.2 210.9L431.6 213.7L431.9 216.1L432.9 218.5L431.0 220.4L433.5 219.1L436.1 221.5L438.1 221.9L438.0 222.4L438.4 224.7L439.5 224.8L441.2 226.7L442.7 228.0L443.8 228.8L446.2 229.9L448.0 231.8L451.7 230.3L452.7 230.3L455.1 229.2L458.5 231.1L459.4 229.2L458.9 230.7L460.1 233.7L460.0 234.8L456.4 238.5L456.3 237.6L455.0 238.7L453.5 242.8L454.2 244.1L452.3 245.2L451.9 248.4L452.7 250.4L451.9 250.9L451.5 254.1L449.8 254.6L447.9 255.4L444.5 255.8L442.3 256.0L438.8 258.2L441.2 261.1L444.8 262.1L446.5 265.3L448.0 265.1L447.5 266.3L449.0 267.7L451.7 271.2L454.4 271.4L455.9 273.6L456.3 274.6L460.7 275.4L462.3 274.9L462.7 276.2L465.2 276.6L469.0 275.9L469.5 278.1L472.4 276.7L472.8 277.3L477.0 279.8L476.9 280.5L481.3 280.7L480.8 282.1L481.4 282.2L485.0 285.6L484.9 288.0L485.9 289.5L489.0 288.7L489.5 289.9L491.5 291.8L493.6 292.3L494.2 295.7L495.9 296.5L497.6 299.8L498.1 301.9L497.3 303.4L496.4 304.5L498.2 305.6L499.0 307.9L501.5 307.6L505.1 308.4L506.0 308.9L508.7 310.7L509.5 311.1L511.9 311.3L515.4 313.0L516.9 314.2L519.9 313.8L521.1 314.5L522.9 315.6L525.2 315.8L527.8 317.6L530.4 317.5L533.2 316.0L534.1 318.0L537.0 315.9L537.0 316.9L538.9 316.5L540.9 317.8L545.0 319.3L545.2 319.7L548.7 318.9L551.4 322.1L551.6 322.9L554.1 322.4L557.5 325.4L556.8 326.4L559.5 328.1L558.4 330.1L559.6 331.3L558.9 334.6L557.1 336.3L558.8 338.8L557.2 342.2L559.3 344.2L557.4 344.3L555.9 347.8L555.3 348.0L554.4 352.2L554.3 352.4L551.7 356.3L552.2 357.8L550.2 358.0L549.5 359.7L545.4 361.8L544.5 362.1L541.6 364.3L540.2 366.4L540.0 367.0L538.2 369.2L535.4 367.6L534.0 368.5L530.8 368.9L528.6 369.6L527.3 371.2L526.5 372.4L523.7 373.4L521.3 374.2L519.2 375.5L518.8 378.3L515.5 379.3L515.8 379.6L516.1 382.9L515.9 386.4L516.3 387.8L517.9 391.2L517.7 392.8L519.5 394.3L519.4 395.6L520.5 395.5L522.5 397.7L525.1 396.6L526.7 399.0L530.9 398.9L531.3 398.1L533.4 399.2L535.0 399.5L537.4 401.4L541.4 400.9L541.4 402.8L543.6 401.7L544.8 402.5L548.2 403.5L549.5 404.2L550.5 405.1L552.4 407.2L553.9 407.7L556.3 410.0L558.7 412.4L560.4 414.8L561.5 417.5L561.8 418.0L564.7 419.5L565.2 423.0L564.6 425.5L568.2 427.0L569.1 429.6L568.7 430.8L570.5 433.7L572.2 435.7L572.4 438.0L573.5 439.4L573.0 439.6L574.3 442.2L575.7 445.3L578.5 446.4L580.3 448.3L581.4 448.1L583.8 451.8L584.3 453.3L586.0 454.0L587.5 456.6L586.9 458.7L591.3 457.5L593.9 458.6L593.4 459.0L593.6 461.9L594.7 463.7L594.6 464.3L593.7 466.9L595.8 469.2L595.7 470.5L594.7 473.4L596.9 476.7L597.3 477.7L597.3 480.3L598.0 481.4L600.0 483.7L601.1 487.8L599.2 488.5L602.3 491.9L602.2 492.0L602.6 496.0L603.6 497.0L604.4 498.9L607.9 499.4L608.8 502.1L610.2 504.3L609.6 506.5L611.5 505.6L611.7 508.5L614.5 509.5L615.2 511.1L617.2 514.1L617.3 515.9L620.7 516.1L622.0 519.8L621.1 520.7L618.9 523.0L619.9 525.6L617.3 527.2L617.6 528.2L617.6 532.4L618.6 534.8L619.0 534.9L618.2 536.2L616.3 539.9L616.2 541.0L614.0 542.9L612.8 543.2L610.1 543.2L608.1 545.6L606.7 547.7L603.8 547.6L604.1 549.3L601.3 551.5L598.8 553.9L598.6 554.0L595.7 555.4L593.7 557.1L590.9 557.8L589.3 561.2L590.1 561.3L591.3 565.6L590.0 565.2L589.3 567.1L589.2 569.2L588.4 571.7L588.8 575.5L588.8 576.2L586.1 578.5L584.3 580.1L581.8 581.9L582.2 583.2L578.9 586.3L577.9 586.9L574.2 590.0L575.5 592.6L578.1 595.8L578.9 595.5L577.6 599.5L580.4 600.9L580.0 601.6L579.8 606.2L581.4 608.1L582.3 608.4L580.4 610.2L582.0 613.7L583.7 615.9L583.4 618.0L583.6 619.5L583.2 622.2L584.5 624.6L586.4 624.9L584.7 626.8L585.9 630.1L584.2 630.4L585.1 633.8L583.7 635.0L583.4 636.5L581.6 639.9L582.9 642.4L582.2 644.0L579.9 645.4L581.4 648.7L578.5 648.9L578.0 652.7L576.8 653.6L576.5 657.5L574.6 657.1L574.2 660.2L574.5 661.6L576.4 664.4L577.2 664.1L580.2 665.6L581.4 666.6L581.3 669.3L583.6 671.1L586.2 670.3L587.5 672.2L590.8 675.0L590.8 675.2L592.6 678.6L593.9 677.8L595.2 680.6L599.2 683.2L600.3 684.7L602.5 684.0L602.1 687.0L605.3 685.7L606.3 688.3L606.7 689.8L607.3 690.5L608.9 693.1L612.0 694.1L614.1 695.1L614.4 697.6L617.8 697.3L617.6 698.1L617.5 701.9L616.0 702.9L615.9 704.0L612.5 708.3L614.2 708.5L612.8 710.9L616.0 713.9L617.5 715.9L618.4 714.4L622.2 715.6L622.3 716.2L624.5 714.1L625.7 714.7L630.3 713.5L632.4 711.0L632.4 711.4L635.5 714.8L634.9 714.9L636.1 717.6L638.5 718.8L640.2 721.3L642.3 722.5L643.7 722.2L644.3 724.4L646.9 725.6L646.6 729.6L648.8 728.1L650.3 730.0L653.1 731.7L656.7 732.3L657.0 730.8L658.6 732.9L662.4 733.8L663.1 734.7L663.5 737.8L663.2 740.7L662.2 741.1L663.5 743.6L663.5 745.9L664.8 747.4L664.1 749.6L665.2 753.4L667.8 753.9L668.6 757.8L668.6 757.7L669.1 760.9L669.3 761.4L665.8 764.3L664.8 765.3L660.5 764.4L658.7 765.0L659.0 766.9L656.9 766.3L654.6 766.5L650.9 767.4L650.8 765.5L647.8 768.3L644.7 769.0L642.4 769.9L641.2 772.5L640.8 773.0L637.4 774.8L637.8 776.0L635.2 777.6L635.0 780.0L631.5 780.3L630.9 783.1L629.5 783.2L626.1 786.2L624.8 786.5L622.4 789.7L620.4 790.0L618.5 790.9L617.9 793.6L614.4 792.3L613.4 793.4L609.3 796.4L609.1 797.8L607.7 799.7L606.5 799.4L603.2 800.5L602.9 801.5L599.4 800.7L598.1 800.4L595.4 799.7L594.4 801.5L591.2 800.9L591.2 802.9L587.4 801.1L587.5 804.1L584.1 802.2L583.3 802.4L581.2 802.4L579.0 800.4L576.8 799.8L573.7 800.8L572.8 798.2L569.1 798.0L567.9 797.6L564.7 796.8L564.4 798.2L560.4 796.8L560.4 795.0L558.6 794.6L555.9 795.2L553.9 793.9L551.3 794.0L549.2 793.6L547.3 793.6L544.0 794.7L543.3 794.2L542.0 796.3L539.1 795.2L537.1 795.6L534.1 797.1L532.0 797.1L531.1 796.0L529.4 796.1L527.6 798.1L525.0 796.0L522.9 796.9L522.1 796.3L519.8 798.5L517.4 797.8L513.9 798.0L512.7 797.7L511.8 795.3L509.4 796.8L505.3 794.5L505.2 793.3L503.6 792.9L501.3 791.9L498.4 793.3L496.3 789.7L495.9 788.0L493.4 785.8L492.5 786.0L492.8 784.1L489.8 782.2L488.1 780.0L488.0 778.0L487.2 777.0L484.3 776.6L480.9 775.5L480.4 772.5L478.9 771.1L477.5 770.9L473.8 770.4L472.1 767.8L471.0 766.4L469.2 767.0L466.6 769.0L464.4 768.1L461.6 766.3L458.8 766.7L458.4 767.5L456.0 768.8L452.9 766.9L452.3 766.3L448.5 767.3L446.7 767.3L445.0 767.9L444.3 765.6L442.7 765.2L439.7 765.3L438.3 761.9L436.1 762.1L436.6 761.3L433.3 759.0L430.1 759.3L429.6 757.6L427.8 757.1L426.6 757.1L422.6 757.4L420.0 756.2L419.0 755.3L416.0 756.6L413.8 755.8L414.3 754.5L410.2 755.7L409.0 755.0L407.9 752.9L404.4 752.4L401.6 753.2L401.6 751.9L397.8 751.1L398.3 748.8L396.6 747.5L393.5 745.3L391.9 743.9L390.2 745.7L389.1 745.8L387.1 744.0L384.7 744.3L383.3 744.4L379.8 744.6L382.2 741.3L382.5 738.7L380.6 737.3L381.7 737.2L381.5 733.5L381.7 731.4L379.7 731.0L379.3 728.6L377.8 727.6L375.7 725.5L374.9 723.7L375.8 721.8L377.9 719.1L378.6 718.5L379.9 717.7L381.8 713.7L383.4 714.7L386.1 711.5L387.3 710.2L391.2 710.8L393.2 710.1L393.5 708.7L396.4 708.3L399.3 707.3L398.8 706.0L402.8 705.0L402.2 701.7L403.8 700.0L406.3 700.1L406.1 698.1L406.5 694.6L405.4 692.0L407.7 690.2L407.7 688.8L408.1 686.3L410.0 685.5L411.5 682.4L414.4 680.9L416.1 680.0L415.9 678.2L419.1 677.9L420.8 676.5L423.4 673.9L426.0 671.9L427.5 670.5L426.8 669.0L430.6 669.5L430.1 666.5L432.7 665.8L433.1 663.3L434.7 662.6L435.7 661.3L437.0 657.6L439.6 656.6L439.3 655.2L440.6 653.9L443.8 652.1L445.0 649.1L445.9 647.7L448.8 645.3L450.3 643.6L449.9 642.7L452.4 641.4L451.4 640.4L451.5 637.2L452.9 635.9L451.4 634.6L448.3 632.7L445.7 633.1L445.0 631.8L442.0 629.6L442.0 628.6L438.4 627.0L438.9 625.0L435.2 623.8L435.0 623.9L431.4 620.8L429.6 620.0L428.3 618.4L425.7 617.2L425.5 617.5L421.8 616.5L420.6 613.3L421.8 612.8L419.9 610.1L417.2 609.1L414.9 608.3L413.6 608.2L411.6 610.7L410.4 610.3L408.2 610.6L404.8 611.8L403.5 613.0L402.8 613.0L399.9 614.7L397.4 614.0L396.5 617.1L395.0 617.8L393.5 618.9L391.2 619.4L388.6 621.1L386.3 621.7L386.7 620.8L384.7 617.7L382.6 616.5L381.6 614.6L381.3 614.0L379.4 611.2L380.5 608.4L379.2 608.0L376.4 605.2L375.2 604.4L375.9 602.1L372.0 600.7L370.8 600.8L368.4 600.2L366.9 599.6L367.4 599.0L368.5 596.6L370.8 595.1L371.6 594.5L373.9 590.7L375.3 590.4L376.2 589.3L379.0 588.8L380.2 585.6L381.2 584.8L384.6 582.2L384.1 581.4L386.1 578.3L386.9 578.3L390.3 576.4L390.4 574.1L390.7 573.2L392.1 570.3L394.4 568.7L393.0 565.2L392.9 562.7L393.2 561.3L392.9 559.0L391.1 556.9L389.8 555.2L387.0 555.2L386.3 552.3L384.8 551.4L383.1 551.1L381.7 549.5L380.4 550.0L376.0 549.1L376.3 548.2L372.5 547.1L372.3 543.6L368.9 545.0L369.0 541.8L365.9 540.3L364.2 540.8L362.5 537.9L362.0 538.4L357.9 537.5L357.1 535.9L355.2 535.8L353.5 535.3L349.8 534.5L348.7 534.2L346.4 534.2L347.2 530.4L346.8 528.0L348.1 525.7L348.5 523.9L350.3 522.9L352.1 521.9L352.3 519.8L352.6 516.9L352.1 515.7L350.3 512.5L350.9 509.4L349.0 509.0L346.3 506.9L347.1 505.7L346.6 503.8L347.6 500.4L349.2 497.1L349.2 496.7L348.7 495.3L349.2 492.2L350.2 491.0L349.8 488.0L350.8 485.9L352.2 482.8L352.6 480.7L350.6 478.3L349.6 478.2L349.0 475.6L347.1 472.3L346.2 471.0L346.4 469.5L344.0 467.3L345.6 464.7L341.9 462.0L340.4 459.6L341.6 458.8L339.3 456.7L338.5 453.7L340.2 452.2L343.0 450.6L345.0 448.5L347.0 448.1L349.3 446.1L349.7 444.9L350.9 445.3L350.1 441.8L350.0 440.9L348.8 437.4L347.8 435.8L347.7 433.8L348.4 433.1L346.5 430.1L346.3 426.8L349.5 426.0L350.8 423.6L349.3 421.4L351.9 420.9L354.0 417.5L353.5 414.5L355.1 412.7L355.8 411.2L357.4 412.0L359.8 411.8L361.7 409.8L363.9 405.7L367.6 404.6L369.2 403.0L368.8 403.1L372.2 401.8L373.7 398.1L375.0 398.3L376.1 397.4L377.0 395.9L379.8 391.7L378.6 391.5L381.5 387.8L380.7 387.6L380.9 385.9L382.3 381.7L382.4 381.1L383.1 379.3L383.7 377.6L385.7 375.1L387.8 372.5L387.6 371.4L389.7 369.4L389.1 366.0L388.2 365.8L391.0 363.4L391.0 360.7L393.8 359.3L391.5 355.8L389.8 355.4L388.3 352.8L387.7 351.3L387.0 347.6L383.5 345.5L383.4 344.3L383.2 343.1L379.8 340.7L380.7 338.5L378.7 335.2L378.1 334.9L376.3 333.5L374.0 329.5L373.2 329.8L370.9 328.0L371.2 324.8L368.6 324.4L366.5 321.3L363.5 322.9L362.6 322.1L358.3 323.0L358.2 320.2L355.6 320.8L354.4 318.6L351.2 317.5L348.4 315.2L346.3 315.8L344.8 314.5L342.8 313.5L340.1 311.4L340.4 311.4L335.9 311.3L335.9 308.7L333.6 308.1L331.5 305.9L328.3 307.4L328.8 304.8L328.5 302.1L329.6 300.5L330.6 299.4L330.7 297.9L329.8 293.3L330.2 291.7L330.5 289.3L332.4 289.5L332.8 287.7L335.3 283.2L335.6 282.1L335.5 281.6L337.1 278.4L339.4 277.5L341.5 274.6L343.0 272.5L346.5 273.5L346.1 269.5L347.9 269.0L351.4 269.2L352.9 265.4L354.5 265.9L355.8 265.3L353.1 260.9L354.0 261.1L352.2 257.7L350.3 257.3L347.3 254.5L346.1 252.3L345.1 250.8L343.2 248.7L343.2 246.3L342.1 244.7L338.9 244.7L338.2 242.7L338.0 242.3L333.9 240.8L331.8 241.9L331.8 240.8L328.7 239.4L327.7 239.2L325.1 237.6L321.9 236.8L321.2 237.6L318.3 236.4L317.3 233.1L315.6 230.6L318.0 228.8L316.6 227.2L317.6 226.3L317.5 224.4L318.9 222.7L322.1 219.2L323.1 217.9L324.0 216.1L325.6 216.7L328.6 214.9L327.3 211.5L330.7 209.2L331.5 208.2L333.2 205.4L333.8 204.3L332.9 201.3L336.9 199.7L337.1 198.4Z"/></clipPath>
<filter id="b3" x="-20%" y="-20%" width="140%" height="140%"><feGaussianBlur stdDeviation="3"/></filter>
<filter id="b6" x="-20%" y="-20%" width="140%" height="140%"><feGaussianBlur stdDeviation="6"/></filter>
<filter id="b10" x="-20%" y="-20%" width="140%" height="140%"><feGaussianBlur stdDeviation="10"/></filter>
<filter id="b1" x="-20%" y="-20%" width="140%" height="140%"><feGaussianBlur stdDeviation="1.2"/></filter>
<linearGradient id="lg" x1="0" y1="0" x2="0" y2="1"><stop offset="0" stop-color="#fff"/><stop offset="1" stop-color="#000"/></linearGradient>
<linearGradient id="gtb" gradientUnits="userSpaceOnUse" x1="428.9" y1="202.7" x2="377.8" y2="217.0"><stop offset="0" stop-color="#b0b0b0"/><stop offset="1" stop-color="#5c5c5c"/></linearGradient>
<linearGradient id="gcp" gradientUnits="userSpaceOnUse" x1="463.0" y1="370.6" x2="426.2" y2="472.8"><stop offset="0" stop-color="#2c2c2c"/><stop offset="0.35" stop-color="#464646"/><stop offset="0.75" stop-color="#8e8e8e"/><stop offset="1" stop-color="#b8b8b8"/></linearGradient>
<linearGradient id="gep" gradientUnits="userSpaceOnUse" x1="509.4" y1="515.1" x2="564.6" y2="523.3"><stop offset="0" stop-color="#989898"/><stop offset="0.5" stop-color="#6a6a6a"/><stop offset="1" stop-color="#262626"/></linearGradient>
<linearGradient id="gnw" gradientUnits="userSpaceOnUse" x1="377.8" y1="261.9" x2="345.1" y2="315.0"><stop offset="0" stop-color="#707070"/><stop offset="0.5" stop-color="#b4b4b4"/><stop offset="0.85" stop-color="#f0f0f0"/><stop offset="1" stop-color="#fff"/></linearGradient>
<filter id="disp" x="0" y="0" width="100%" height="100%" filterUnits="objectBoundingBox" color-interpolation-filters="sRGB"><feTurbulence type="fractalNoise" baseFrequency="0.06" numOctaves="2" seed="11" result="n"/><feComponentTransfer in="n" result="q"><feFuncR type="discrete" tableValues="0 0 0 0 0 0.05 0.12 0.22 0.32 0.43 0.57 0.68 0.78 0.88 0.95 1 1 1 1 1"/><feFuncG type="discrete" tableValues="0 0 0 0 0 0.05 0.12 0.22 0.32 0.43 0.57 0.68 0.78 0.88 0.95 1 1 1 1 1"/></feComponentTransfer><feDisplacementMap in="SourceGraphic" in2="q" scale="11" xChannelSelector="R" yChannelSelector="G"/></filter>
</defs>
<rect x="270" y="173" width="462" height="654" fill="#000"/>
<g clip-path="url(#cm)">
<g filter="url(#disp)">
<rect x="280" y="160" width="440" height="680" fill="#4a4a4a"/>
<path d="M371.7 284.4L386.0 280.3L404.4 292.6L420.7 308.9L433.0 321.1L430.9 333.4L422.8 349.9L388.0 349.9L379.9 337.5L371.7 327.3L367.6 313.0L371.7 300.7Z" fill="#9a9a9a" filter="url(#b1)"/>
<path d="M404.4 231.3L420.7 225.1L437.1 223.1L449.3 231.3L453.4 241.5L449.3 251.7L437.1 255.8L420.7 251.7L408.5 243.5Z" fill="#707070" filter="url(#b3)"/>
<path d="M583.0 509.0L595.2 500.9L611.6 507.0L617.7 513.1L620.8 519.2L617.7 527.4L619.7 535.6L613.6 541.7L607.5 545.8L601.4 551.9L595.2 556.0L590.1 560.1L590.1 568.3L588.1 576.4L583.0 582.6L576.9 587.7L562.6 576.4L578.9 562.1L587.1 545.8L583.0 525.4Z" fill="#a0a0a0" filter="url(#b1)"/>
<path d="M367.0 541.3L375.1 547.4L385.4 551.5L391.5 557.6L393.5 567.8L389.4 576.0L383.3 582.1L379.2 588.3L371.1 594.4L366.0 599.5L373.1 600.5L379.2 606.6L381.3 614.8L387.4 622.0L397.6 614.8L407.8 610.7L418.0 608.7L422.1 594.4L426.2 578.0L418.0 561.7L407.8 547.4L391.5 541.3Z" fill="#8c8c8c" filter="url(#b1)"/>
<path d="M340.4 458.5L337.4 453.4L342.5 450.3L350.6 446.2L360.9 442.1L373.1 446.2L375.1 466.6L379.2 483.0L367.0 491.1L352.7 497.3L350.6 487.1L347.6 472.8Z" fill="#8a8a8a" filter="url(#b1)"/>
<path d="M443.2 272.1L457.5 274.2L467.7 276.2L480.0 280.3L486.1 288.5L494.3 292.6L498.3 300.7L496.3 305.8L484.0 308.9L469.7 300.7L453.4 288.5L441.1 280.3Z" fill="#8a8a8a" filter="url(#b1)"/>
<path d="M527.8 316.3L542.1 317.4L554.4 322.5L559.5 328.6L558.5 336.8L546.2 334.7L531.9 332.7L529.9 324.5Z" fill="#858585" filter="url(#b1)"/>
<path d="M641.4 729.9L655.7 730.9L663.8 735.0L661.8 742.1L664.9 750.3L668.9 756.4L667.9 762.6L657.7 766.6L649.5 766.6L643.4 758.5L641.4 746.2Z" fill="#666666" filter="url(#b1)"/>
<path d="M569.9 709.4L582.1 707.4L590.3 721.7L590.3 738.0L586.2 748.3L578.0 742.1L571.9 725.8Z" fill="#858585" filter="url(#b1)"/>
<path d="M478.5 707.4L490.7 693.1L511.1 691.1L523.4 697.2L521.4 713.5L511.1 713.5L503.0 721.7L488.7 727.8L482.6 717.6Z" fill="#707070" filter="url(#b1)"/>
<path id="cw" d="M294 183L326 180L331 199L294 196ZM326 180L343 185L353 199L331 199ZM446 172L473 175L474 199L437 204ZM525 184L547 182L539 202L514 202ZM556 177L588 173L579 197L573 202ZM588 173L620 178L616 213L579 197ZM620 178L630 186L636 204L616 213ZM683 181L705 180L709 206L679 206ZM353 199L380 211L369 221L345 230ZM474 199L500 211L490 237L475 236ZM573 202L579 197L595 222L562 223ZM616 213L636 204L641 228L604 233ZM661 208L679 206L680 224L666 220ZM369 221L388 234L396 256L368 260ZM547 228L562 223L569 243L541 248ZM562 223L595 222L591 260L569 243ZM666 220L680 224L682 260L662 248ZM450 257L475 254L466 280L438 270ZM522 249L541 248L545 281L520 283ZM639 258L662 248L657 268L632 280ZM682 260L715 245L715 272L682 273ZM293 269L315 275L332 293L300 301ZM315 275L342 283L350 300L332 293ZM397 273L420 271L420 301L393 304ZM493 268L520 283L509 292L489 309ZM393 304L420 301L420 328L389 324ZM615 299L636 298L633 321L621 315ZM451 329L470 329L462 351L440 354ZM495 330L520 327L512 346L487 350ZM535 332L562 326L563 350L548 347ZM594 332L621 315L610 344L584 342ZM633 321L658 318L652 354L630 356ZM658 318L685 316L692 352L652 354ZM317 356L352 343L339 373L328 367ZM428 345L440 354L449 378L418 365ZM440 354L462 351L469 364L449 378ZM462 351L487 350L486 370L469 364ZM563 350L584 342L579 373L572 379ZM630 356L652 354L654 364L640 377ZM545 378L572 379L562 399L548 397ZM572 379L579 373L592 396L562 399ZM654 364L690 374L686 390L657 397ZM423 390L440 388L452 428L428 418ZM510 389L548 397L543 414L518 425ZM657 397L686 390L676 418L667 418ZM473 411L489 422L491 447L461 439ZM676 418L702 421L717 442L688 448ZM317 435L347 445L349 477L327 469ZM363 447L391 437L400 474L367 463ZM461 439L491 447L490 470L468 467ZM543 440L563 442L562 464L547 473ZM628 450L662 449L652 465L642 475ZM688 448L717 442L714 464L686 462ZM327 469L349 477L348 496L319 487ZM468 467L490 470L485 499L472 490ZM642 475L652 465L665 494L634 489ZM686 462L714 464L703 497L683 492ZM438 484L472 490L462 510L439 508ZM665 494L683 492L685 522L653 511ZM683 492L703 497L708 519L685 522ZM350 517L365 516L364 540L345 545ZM365 516L390 521L403 545L364 540ZM439 508L462 510L476 545L452 532ZM494 522L511 509L510 537L496 541ZM613 509L631 518L641 545L605 537ZM631 518L653 511L654 537L641 545ZM476 545L496 541L484 559L467 559ZM496 541L510 537L523 561L484 559ZM543 543L562 545L567 563L543 559ZM654 537L677 543L681 571L663 564ZM677 543L707 535L714 558L681 571ZM350 564L373 562L381 585L355 583ZM523 561L543 559L547 594L521 595ZM303 593L327 596L316 614L299 617ZM414 586L446 584L437 609L418 616ZM521 595L547 594L544 618L518 609ZM573 588L592 588L596 609L557 609ZM635 591L656 581L651 609L632 617ZM656 581L682 581L678 609L651 609ZM341 612L368 611L374 630L354 642ZM368 611L400 610L401 629L374 630ZM418 616L437 609L440 631L428 633ZM501 608L518 609L520 631L498 640ZM518 609L544 618L537 632L520 631ZM632 617L651 609L665 630L635 639ZM678 609L703 603L715 643L686 645ZM325 637L354 642L342 661L324 667ZM401 629L428 633L417 654L400 652ZM428 633L440 631L446 662L417 654ZM440 631L466 641L460 668L446 662ZM466 641L498 640L500 659L460 668ZM498 640L520 631L517 658L500 659ZM537 632L563 643L563 664L542 658ZM365 665L400 652L402 687L369 680ZM517 658L542 658L536 687L518 692ZM542 658L563 664L573 685L536 687ZM582 656L617 655L616 680L595 677ZM617 655L628 667L641 683L616 680ZM343 679L369 680L372 709L349 712ZM447 681L470 688L471 704L443 711ZM536 687L573 685L567 717L538 703ZM616 680L641 683L638 715L618 708ZM293 704L332 703L319 726L303 740ZM372 709L404 713L390 734L367 737ZM443 711L471 704L474 732L437 740ZM495 707L507 704L510 730L498 734ZM507 704L538 703L546 731L510 730ZM567 717L596 710L582 734L556 726ZM638 715L652 706L657 735L634 740ZM682 705L707 700L702 725L679 732ZM319 726L345 737L349 761L322 759ZM424 735L437 740L444 752L425 765ZM400 754L425 765L419 788L401 776ZM444 752L465 756L471 787L437 776ZM489 749L514 759L521 789L500 779ZM514 759L546 761L537 775L521 789ZM571 761L586 759L582 781L560 785ZM660 752L689 755L684 787L668 780ZM689 755L713 764L713 774L684 787ZM370 785L401 776L391 798L367 800ZM401 776L419 788L424 796L391 798ZM437 776L471 787L472 805L446 806ZM500 779L521 789L509 805L500 800ZM305 802L332 812L321 832L301 830ZM472 805L500 800L484 824L470 822ZM509 805L536 813L540 833L522 826ZM536 813L572 807L573 824L540 833ZM572 807L594 799L591 833L573 824ZM633 802L660 807L656 828L636 833ZM660 807L675 805L686 834L656 828ZM675 805L701 812L703 831L686 834Z" fill="#fff" fill-opacity="0.09"/>
<path id="cb" d="M343 185L378 180L380 211L353 199ZM473 175L487 172L500 211L474 199ZM487 172L525 184L514 202L500 211ZM421 208L437 204L447 231L425 226ZM500 211L514 202L524 230L490 237ZM514 202L539 202L547 228L524 230ZM579 197L616 213L604 233L595 222ZM294 222L321 236L331 261L292 249ZM321 236L345 230L352 252L331 261ZM388 234L425 226L412 247L396 256ZM447 231L475 236L475 254L450 257ZM475 236L490 237L491 253L475 254ZM524 230L547 228L541 248L522 249ZM604 233L641 228L639 258L603 254ZM292 249L331 261L315 275L293 269ZM331 261L352 252L342 283L315 275ZM368 260L396 256L397 273L375 269ZM396 256L412 247L420 271L397 273ZM491 253L522 249L520 283L493 268ZM541 248L569 243L555 275L545 281ZM603 254L639 258L632 280L606 280ZM342 283L375 269L376 308L350 300ZM420 271L438 270L436 306L420 301ZM466 280L493 268L489 309L477 297ZM545 281L555 275L569 299L532 306ZM580 281L606 280L615 299L590 291ZM632 280L657 268L658 295L636 298ZM332 293L350 300L346 324L323 319ZM376 308L393 304L389 324L374 332ZM509 292L532 306L535 332L520 327ZM569 299L590 291L594 332L562 326ZM636 298L658 295L658 318L633 321ZM658 295L676 299L685 316L658 318ZM306 328L323 319L317 356L304 347ZM346 324L374 332L369 351L352 343ZM520 327L535 332L548 347L512 346ZM369 351L399 344L395 379L365 369ZM512 346L548 347L545 378L517 367ZM328 367L339 373L344 398L320 393ZM365 369L395 379L388 396L379 388ZM418 365L449 378L440 388L423 390ZM579 373L604 379L604 402L592 396ZM604 379L640 377L631 388L604 402ZM690 374L710 371L712 396L686 390ZM305 393L320 393L330 427L294 426ZM320 393L344 398L351 415L330 427ZM379 388L388 396L397 427L377 427ZM495 399L510 389L518 425L489 422ZM592 396L604 402L621 421L595 415ZM631 388L657 397L667 418L641 424ZM294 426L330 427L317 435L306 442ZM330 427L351 415L347 445L317 435ZM428 418L452 428L451 444L428 444ZM489 422L518 425L521 449L491 447ZM518 425L543 414L543 440L521 449ZM641 424L667 418L662 449L628 450ZM667 418L676 418L688 448L662 449ZM306 442L317 435L327 469L298 459ZM451 444L461 439L468 467L442 474ZM491 447L521 449L518 471L490 470ZM521 449L543 440L547 473L518 471ZM588 440L613 443L620 463L593 473ZM613 443L628 450L642 475L620 463ZM662 449L688 448L686 462L652 465ZM349 477L367 463L367 495L348 496ZM367 463L400 474L393 495L367 495ZM400 474L420 460L418 486L393 495ZM420 460L442 474L438 484L418 486ZM442 474L468 467L472 490L438 484ZM490 470L518 471L519 483L485 499ZM518 471L547 473L544 494L519 483ZM562 464L593 473L596 490L563 492ZM593 473L620 463L614 494L596 490ZM652 465L686 462L683 492L665 494ZM319 487L348 496L350 517L323 511ZM485 499L519 483L511 509L494 522ZM519 483L544 494L541 509L511 509ZM544 494L563 492L562 521L541 509ZM634 489L665 494L653 511L631 518ZM417 513L439 508L452 532L421 534ZM462 510L494 522L496 541L476 545ZM541 509L562 521L562 545L543 543ZM291 536L321 547L323 567L298 571ZM321 547L345 545L350 564L323 567ZM562 545L580 536L592 565L567 563ZM580 536L605 537L610 560L592 565ZM641 545L654 537L663 564L638 570ZM391 564L416 561L414 586L394 597ZM438 571L467 559L464 593L446 584ZM484 559L523 561L521 595L494 592ZM543 559L567 563L573 588L547 594ZM592 565L610 560L620 591L592 588ZM638 570L663 564L656 581L635 591ZM663 564L681 571L682 581L656 581ZM681 571L714 558L699 581L682 581ZM327 596L355 583L341 612L316 614ZM381 585L394 597L400 610L368 611ZM446 584L464 593L472 618L437 609ZM464 593L494 592L501 608L472 618ZM494 592L521 595L518 609L501 608ZM682 581L699 581L703 603L678 609ZM299 617L316 614L325 637L305 630ZM614 618L632 617L635 639L620 644ZM651 609L678 609L686 645L665 630ZM305 630L325 637L324 667L293 664ZM354 642L374 630L365 665L342 661ZM374 630L401 629L400 652L365 665ZM597 629L620 644L617 655L582 656ZM620 644L635 639L628 667L617 655ZM635 639L665 630L654 658L628 667ZM293 664L324 667L316 676L293 685ZM324 667L342 661L343 679L316 676ZM446 662L460 668L470 688L447 681ZM460 668L500 659L493 689L470 688ZM500 659L517 658L518 692L493 689ZM563 664L582 656L595 677L573 685ZM654 658L681 656L680 691L661 679ZM293 685L316 676L332 703L293 704ZM369 680L402 687L404 713L372 709ZM402 687L420 689L415 707L404 713ZM470 688L493 689L495 707L471 704ZM493 689L518 692L507 704L495 707ZM573 685L595 677L596 710L567 717ZM680 691L711 686L707 700L682 705ZM332 703L349 712L345 737L319 726ZM538 703L567 717L556 726L546 731ZM618 708L638 715L634 740L615 731ZM390 734L424 735L425 765L400 754ZM510 730L546 731L546 761L514 759ZM615 731L634 740L640 752L604 761ZM657 735L679 732L689 755L660 752ZM297 749L322 759L321 788L305 778ZM425 765L444 752L437 776L419 788ZM465 756L489 749L500 779L471 787ZM305 778L321 788L332 812L305 802ZM537 775L560 785L572 807L536 813ZM638 781L668 780L660 807L633 802ZM668 780L684 787L675 805L660 807ZM332 812L348 802L352 835L321 832ZM424 796L446 806L448 821L424 825ZM446 806L472 805L470 822L448 821ZM594 799L612 802L617 825L591 833Z" fill="#000" fill-opacity="0.16"/>
<g fill="none" stroke="#000" stroke-linecap="round" stroke-linejoin="round">
<path d="M343.5 192.9L343.5 204.7L346.2 212.9L349.2 223.1L357.4 226.2L367.6 230.3L377.8 231.3L391.1 231.3L391.1 239.4L390.1 251.7L391.1 259.9L390.1 272.1L390.1 281.3M391.1 251.7L400.3 256.8L398.3 265.0L406.4 269.1L412.6 270.1L410.5 279.3L417.7 281.3L417.7 289.5L424.8 295.6L433.0 302.8L442.2 304.8L444.2 313.0L440.1 317.1L436.0 322.2L432.0 331.4L430.9 341.6L425.8 345.7M442.2 313.0L453.4 324.2L459.5 331.4L465.7 331.4L471.8 325.2L473.8 321.1L484.0 317.1L494.3 320.1M465.7 331.4L472.8 339.5L472.8 347.7M329.8 194.5L339.0 194.9M424.2 343.1L430.3 342.0L432.3 352.3L436.4 359.4M418.0 354.3L409.9 361.4L403.7 368.6L397.6 375.7L391.5 380.9L389.4 389.0L385.4 405.4L380.3 410.5L374.1 421.7L378.2 431.9L381.3 440.1L385.4 446.2L381.3 456.4L387.4 470.7L386.4 483.0L384.3 492.2L393.5 499.3L387.4 509.5M385.4 445.2L391.5 446.2L403.7 447.2M473.2 340.0L472.2 350.2L468.1 362.5L466.0 372.7L471.1 384.9L476.3 393.1L486.5 396.2M473.2 350.2L481.4 362.5L487.5 376.8L495.7 387.0L501.8 395.1L506.9 400.3L503.8 409.4M506.9 400.3L514.0 409.4L528.3 407.4L536.5 409.4L544.7 415.6L554.9 423.7L556.9 436.0L560.0 440.1M514.0 409.4L519.1 421.7L521.2 425.8L519.1 438.0L516.1 448.3L512.0 456.4L507.9 470.7L515.1 478.9L512.0 489.1L503.8 499.3L497.7 509.5L493.6 517.7M521.2 423.7L526.3 424.8L532.4 434.0L536.5 442.1L535.5 450.3L544.7 458.5L552.9 464.6L560.0 472.8M507.9 474.8L497.7 476.9L489.5 483.0L481.4 487.1L475.2 492.2M481.4 487.1L471.1 487.1L467.1 484.0M452.8 484.0L450.7 497.3L442.6 505.4L442.6 513.6M493.6 372.7L507.9 366.6L524.3 359.4L539.6 353.3M468.6 359.2L465.5 371.5L470.6 383.7L475.7 394.0L487.0 396.0M507.4 400.1L512.5 410.3L519.7 408.3L529.9 407.2L542.1 413.4L554.4 423.6L556.4 434.8L562.6 445.0L565.6 452.2L576.9 459.3L580.9 467.5L586.0 475.7M519.7 422.6L521.7 428.7L517.6 443.0L512.5 457.3L508.4 467.5L513.5 475.7M525.8 424.6L534.0 436.9L536.0 443.0L540.1 452.2L548.3 461.4L555.4 469.5L557.4 475.7M483.9 317.4L494.1 320.4M509.4 463.1L508.4 470.2L513.5 475.3L517.6 479.4L514.6 484.5L510.5 490.6L505.4 498.8L500.3 506.0L495.1 514.1L494.1 525.4L497.2 531.5L502.3 537.6L502.3 549.9M506.4 475.3L497.2 477.4L489.0 483.5L479.8 485.5L474.7 491.7M479.8 485.5L467.6 484.5M453.3 484.5L449.2 497.8L443.1 506.0L444.1 513.1L447.1 521.3L449.2 529.4L457.4 534.6L462.5 541.7L464.5 547.8L460.4 556.0L457.4 561.1L461.4 563.1M549.3 462.0L556.4 470.2L557.4 476.3L559.5 490.6L562.6 498.8L567.7 506.0L570.7 515.1L568.7 525.4L569.7 535.6L571.7 541.7L569.7 551.9L562.6 557.0L552.3 564.2L549.3 570.3L548.3 576.4L557.4 578.5L554.4 582.6L562.6 585.6L562.6 590.7L558.5 595.8L561.5 603.0L570.7 612.2L564.6 617.3L562.6 621.4M579.9 462.0L580.9 469.2L586.0 478.4L591.1 485.5L592.2 490.6L596.3 497.8M524.8 588.7L520.7 596.9L505.4 600.9L501.3 606.0L493.1 607.1L489.0 612.2M534.0 588.7L546.2 592.8M541.1 617.3L536.0 623.4L529.9 625.4L523.7 633.6L518.6 636.7M549.3 625.4L554.4 631.6M449.7 498.4L443.6 504.5L438.5 511.7L431.3 520.9L435.4 528.0L432.3 533.1M442.6 509.6L446.6 520.9L448.7 530.0L458.9 535.1L464.0 545.4L460.9 555.6L456.9 561.7L460.9 563.7M456.9 561.7L446.6 571.9L431.3 584.2L426.2 590.3L427.2 598.5L431.3 602.6M424.2 538.2L421.1 543.3L423.1 551.5M515.1 483.1L511.0 490.2L504.9 498.4L499.7 506.6L493.6 516.8L495.7 529.0L501.8 538.2L502.8 551.5M534.6 648.2L521.4 649.2L516.3 655.3L516.3 660.4L512.2 668.6L506.0 669.6L503.0 661.4M506.0 668.6L497.9 667.6L497.9 671.7M491.7 678.8L482.6 678.8L471.3 679.8L465.2 681.9L458.0 684.9L452.9 687.0L443.7 688.0L439.7 690.0L433.5 686.6M440.7 690.0L427.4 694.1L424.3 701.3L426.4 705.4L424.3 715.6L418.2 723.7L410.0 730.9M444.8 700.3L449.9 705.4L451.9 707.4L448.9 714.6L448.9 719.7M449.9 739.1L452.9 738.7M539.7 659.4L543.8 656.3L550.0 656.3L552.0 662.5L556.1 668.6L553.0 672.7M565.3 671.7L572.4 674.7L580.6 677.8M572.4 674.7L571.4 682.9L569.4 690.0L566.3 697.2L567.3 703.3L562.2 706.4M498.9 737.0L510.1 735.0L517.3 731.9L525.4 727.8L530.6 732.9L537.7 736.0L539.7 740.1L535.7 745.2L533.6 748.3M539.7 738.0L545.9 738.0L553.0 734.0L553.0 723.7M555.1 742.1L556.1 748.3L557.1 754.4M590.3 686.0L594.4 692.1L598.5 698.2L597.4 706.4L599.5 713.5L603.6 721.7L612.8 723.7L623.0 723.3M632.2 728.9L632.2 734.0L634.2 738.0L633.2 742.1L630.1 752.3L626.0 758.5L624.0 764.6" stroke-width="70" stroke-opacity="0.3" filter="url(#b10)"/>
<path d="M343.5 192.9L343.5 204.7L346.2 212.9L349.2 223.1L357.4 226.2L367.6 230.3L377.8 231.3L391.1 231.3L391.1 239.4L390.1 251.7L391.1 259.9L390.1 272.1L390.1 281.3M391.1 251.7L400.3 256.8L398.3 265.0L406.4 269.1L412.6 270.1L410.5 279.3L417.7 281.3L417.7 289.5L424.8 295.6L433.0 302.8L442.2 304.8L444.2 313.0L440.1 317.1L436.0 322.2L432.0 331.4L430.9 341.6L425.8 345.7M442.2 313.0L453.4 324.2L459.5 331.4L465.7 331.4L471.8 325.2L473.8 321.1L484.0 317.1L494.3 320.1M465.7 331.4L472.8 339.5L472.8 347.7M329.8 194.5L339.0 194.9M424.2 343.1L430.3 342.0L432.3 352.3L436.4 359.4M418.0 354.3L409.9 361.4L403.7 368.6L397.6 375.7L391.5 380.9L389.4 389.0L385.4 405.4L380.3 410.5L374.1 421.7L378.2 431.9L381.3 440.1L385.4 446.2L381.3 456.4L387.4 470.7L386.4 483.0L384.3 492.2L393.5 499.3L387.4 509.5M385.4 445.2L391.5 446.2L403.7 447.2M473.2 340.0L472.2 350.2L468.1 362.5L466.0 372.7L471.1 384.9L476.3 393.1L486.5 396.2M473.2 350.2L481.4 362.5L487.5 376.8L495.7 387.0L501.8 395.1L506.9 400.3L503.8 409.4M506.9 400.3L514.0 409.4L528.3 407.4L536.5 409.4L544.7 415.6L554.9 423.7L556.9 436.0L560.0 440.1M514.0 409.4L519.1 421.7L521.2 425.8L519.1 438.0L516.1 448.3L512.0 456.4L507.9 470.7L515.1 478.9L512.0 489.1L503.8 499.3L497.7 509.5L493.6 517.7M521.2 423.7L526.3 424.8L532.4 434.0L536.5 442.1L535.5 450.3L544.7 458.5L552.9 464.6L560.0 472.8M507.9 474.8L497.7 476.9L489.5 483.0L481.4 487.1L475.2 492.2M481.4 487.1L471.1 487.1L467.1 484.0M452.8 484.0L450.7 497.3L442.6 505.4L442.6 513.6M493.6 372.7L507.9 366.6L524.3 359.4L539.6 353.3M468.6 359.2L465.5 371.5L470.6 383.7L475.7 394.0L487.0 396.0M507.4 400.1L512.5 410.3L519.7 408.3L529.9 407.2L542.1 413.4L554.4 423.6L556.4 434.8L562.6 445.0L565.6 452.2L576.9 459.3L580.9 467.5L586.0 475.7M519.7 422.6L521.7 428.7L517.6 443.0L512.5 457.3L508.4 467.5L513.5 475.7M525.8 424.6L534.0 436.9L536.0 443.0L540.1 452.2L548.3 461.4L555.4 469.5L557.4 475.7M483.9 317.4L494.1 320.4M509.4 463.1L508.4 470.2L513.5 475.3L517.6 479.4L514.6 484.5L510.5 490.6L505.4 498.8L500.3 506.0L495.1 514.1L494.1 525.4L497.2 531.5L502.3 537.6L502.3 549.9M506.4 475.3L497.2 477.4L489.0 483.5L479.8 485.5L474.7 491.7M479.8 485.5L467.6 484.5M453.3 484.5L449.2 497.8L443.1 506.0L444.1 513.1L447.1 521.3L449.2 529.4L457.4 534.6L462.5 541.7L464.5 547.8L460.4 556.0L457.4 561.1L461.4 563.1M549.3 462.0L556.4 470.2L557.4 476.3L559.5 490.6L562.6 498.8L567.7 506.0L570.7 515.1L568.7 525.4L569.7 535.6L571.7 541.7L569.7 551.9L562.6 557.0L552.3 564.2L549.3 570.3L548.3 576.4L557.4 578.5L554.4 582.6L562.6 585.6L562.6 590.7L558.5 595.8L561.5 603.0L570.7 612.2L564.6 617.3L562.6 621.4M579.9 462.0L580.9 469.2L586.0 478.4L591.1 485.5L592.2 490.6L596.3 497.8M524.8 588.7L520.7 596.9L505.4 600.9L501.3 606.0L493.1 607.1L489.0 612.2M534.0 588.7L546.2 592.8M541.1 617.3L536.0 623.4L529.9 625.4L523.7 633.6L518.6 636.7M549.3 625.4L554.4 631.6M449.7 498.4L443.6 504.5L438.5 511.7L431.3 520.9L435.4 528.0L432.3 533.1M442.6 509.6L446.6 520.9L448.7 530.0L458.9 535.1L464.0 545.4L460.9 555.6L456.9 561.7L460.9 563.7M456.9 561.7L446.6 571.9L431.3 584.2L426.2 590.3L427.2 598.5L431.3 602.6M424.2 538.2L421.1 543.3L423.1 551.5M515.1 483.1L511.0 490.2L504.9 498.4L499.7 506.6L493.6 516.8L495.7 529.0L501.8 538.2L502.8 551.5M534.6 648.2L521.4 649.2L516.3 655.3L516.3 660.4L512.2 668.6L506.0 669.6L503.0 661.4M506.0 668.6L497.9 667.6L497.9 671.7M491.7 678.8L482.6 678.8L471.3 679.8L465.2 681.9L458.0 684.9L452.9 687.0L443.7 688.0L439.7 690.0L433.5 686.6M440.7 690.0L427.4 694.1L424.3 701.3L426.4 705.4L424.3 715.6L418.2 723.7L410.0 730.9M444.8 700.3L449.9 705.4L451.9 707.4L448.9 714.6L448.9 719.7M449.9 739.1L452.9 738.7M539.7 659.4L543.8 656.3L550.0 656.3L552.0 662.5L556.1 668.6L553.0 672.7M565.3 671.7L572.4 674.7L580.6 677.8M572.4 674.7L571.4 682.9L569.4 690.0L566.3 697.2L567.3 703.3L562.2 706.4M498.9 737.0L510.1 735.0L517.3 731.9L525.4 727.8L530.6 732.9L537.7 736.0L539.7 740.1L535.7 745.2L533.6 748.3M539.7 738.0L545.9 738.0L553.0 734.0L553.0 723.7M555.1 742.1L556.1 748.3L557.1 754.4M590.3 686.0L594.4 692.1L598.5 698.2L597.4 706.4L599.5 713.5L603.6 721.7L612.8 723.7L623.0 723.3M632.2 728.9L632.2 734.0L634.2 738.0L633.2 742.1L630.1 752.3L626.0 758.5L624.0 764.6" stroke-width="40" stroke-opacity="0.4" filter="url(#b6)"/>
<path d="M343.5 192.9L343.5 204.7L346.2 212.9L349.2 223.1L357.4 226.2L367.6 230.3L377.8 231.3L391.1 231.3L391.1 239.4L390.1 251.7L391.1 259.9L390.1 272.1L390.1 281.3M391.1 251.7L400.3 256.8L398.3 265.0L406.4 269.1L412.6 270.1L410.5 279.3L417.7 281.3L417.7 289.5L424.8 295.6L433.0 302.8L442.2 304.8L444.2 313.0L440.1 317.1L436.0 322.2L432.0 331.4L430.9 341.6L425.8 345.7M442.2 313.0L453.4 324.2L459.5 331.4L465.7 331.4L471.8 325.2L473.8 321.1L484.0 317.1L494.3 320.1M465.7 331.4L472.8 339.5L472.8 347.7M329.8 194.5L339.0 194.9M424.2 343.1L430.3 342.0L432.3 352.3L436.4 359.4M418.0 354.3L409.9 361.4L403.7 368.6L397.6 375.7L391.5 380.9L389.4 389.0L385.4 405.4L380.3 410.5L374.1 421.7L378.2 431.9L381.3 440.1L385.4 446.2L381.3 456.4L387.4 470.7L386.4 483.0L384.3 492.2L393.5 499.3L387.4 509.5M385.4 445.2L391.5 446.2L403.7 447.2M473.2 340.0L472.2 350.2L468.1 362.5L466.0 372.7L471.1 384.9L476.3 393.1L486.5 396.2M473.2 350.2L481.4 362.5L487.5 376.8L495.7 387.0L501.8 395.1L506.9 400.3L503.8 409.4M506.9 400.3L514.0 409.4L528.3 407.4L536.5 409.4L544.7 415.6L554.9 423.7L556.9 436.0L560.0 440.1M514.0 409.4L519.1 421.7L521.2 425.8L519.1 438.0L516.1 448.3L512.0 456.4L507.9 470.7L515.1 478.9L512.0 489.1L503.8 499.3L497.7 509.5L493.6 517.7M521.2 423.7L526.3 424.8L532.4 434.0L536.5 442.1L535.5 450.3L544.7 458.5L552.9 464.6L560.0 472.8M507.9 474.8L497.7 476.9L489.5 483.0L481.4 487.1L475.2 492.2M481.4 487.1L471.1 487.1L467.1 484.0M452.8 484.0L450.7 497.3L442.6 505.4L442.6 513.6M493.6 372.7L507.9 366.6L524.3 359.4L539.6 353.3M468.6 359.2L465.5 371.5L470.6 383.7L475.7 394.0L487.0 396.0M507.4 400.1L512.5 410.3L519.7 408.3L529.9 407.2L542.1 413.4L554.4 423.6L556.4 434.8L562.6 445.0L565.6 452.2L576.9 459.3L580.9 467.5L586.0 475.7M519.7 422.6L521.7 428.7L517.6 443.0L512.5 457.3L508.4 467.5L513.5 475.7M525.8 424.6L534.0 436.9L536.0 443.0L540.1 452.2L548.3 461.4L555.4 469.5L557.4 475.7M483.9 317.4L494.1 320.4M509.4 463.1L508.4 470.2L513.5 475.3L517.6 479.4L514.6 484.5L510.5 490.6L505.4 498.8L500.3 506.0L495.1 514.1L494.1 525.4L497.2 531.5L502.3 537.6L502.3 549.9M506.4 475.3L497.2 477.4L489.0 483.5L479.8 485.5L474.7 491.7M479.8 485.5L467.6 484.5M453.3 484.5L449.2 497.8L443.1 506.0L444.1 513.1L447.1 521.3L449.2 529.4L457.4 534.6L462.5 541.7L464.5 547.8L460.4 556.0L457.4 561.1L461.4 563.1M549.3 462.0L556.4 470.2L557.4 476.3L559.5 490.6L562.6 498.8L567.7 506.0L570.7 515.1L568.7 525.4L569.7 535.6L571.7 541.7L569.7 551.9L562.6 557.0L552.3 564.2L549.3 570.3L548.3 576.4L557.4 578.5L554.4 582.6L562.6 585.6L562.6 590.7L558.5 595.8L561.5 603.0L570.7 612.2L564.6 617.3L562.6 621.4M579.9 462.0L580.9 469.2L586.0 478.4L591.1 485.5L592.2 490.6L596.3 497.8M524.8 588.7L520.7 596.9L505.4 600.9L501.3 606.0L493.1 607.1L489.0 612.2M534.0 588.7L546.2 592.8M541.1 617.3L536.0 623.4L529.9 625.4L523.7 633.6L518.6 636.7M549.3 625.4L554.4 631.6M449.7 498.4L443.6 504.5L438.5 511.7L431.3 520.9L435.4 528.0L432.3 533.1M442.6 509.6L446.6 520.9L448.7 530.0L458.9 535.1L464.0 545.4L460.9 555.6L456.9 561.7L460.9 563.7M456.9 561.7L446.6 571.9L431.3 584.2L426.2 590.3L427.2 598.5L431.3 602.6M424.2 538.2L421.1 543.3L423.1 551.5M515.1 483.1L511.0 490.2L504.9 498.4L499.7 506.6L493.6 516.8L495.7 529.0L501.8 538.2L502.8 551.5M534.6 648.2L521.4 649.2L516.3 655.3L516.3 660.4L512.2 668.6L506.0 669.6L503.0 661.4M506.0 668.6L497.9 667.6L497.9 671.7M491.7 678.8L482.6 678.8L471.3 679.8L465.2 681.9L458.0 684.9L452.9 687.0L443.7 688.0L439.7 690.0L433.5 686.6M440.7 690.0L427.4 694.1L424.3 701.3L426.4 705.4L424.3 715.6L418.2 723.7L410.0 730.9M444.8 700.3L449.9 705.4L451.9 707.4L448.9 714.6L448.9 719.7M449.9 739.1L452.9 738.7M539.7 659.4L543.8 656.3L550.0 656.3L552.0 662.5L556.1 668.6L553.0 672.7M565.3 671.7L572.4 674.7L580.6 677.8M572.4 674.7L571.4 682.9L569.4 690.0L566.3 697.2L567.3 703.3L562.2 706.4M498.9 737.0L510.1 735.0L517.3 731.9L525.4 727.8L530.6 732.9L537.7 736.0L539.7 740.1L535.7 745.2L533.6 748.3M539.7 738.0L545.9 738.0L553.0 734.0L553.0 723.7M555.1 742.1L556.1 748.3L557.1 754.4M590.3 686.0L594.4 692.1L598.5 698.2L597.4 706.4L599.5 713.5L603.6 721.7L612.8 723.7L623.0 723.3M632.2 728.9L632.2 734.0L634.2 738.0L633.2 742.1L630.1 752.3L626.0 758.5L624.0 764.6" stroke-width="22" stroke-opacity="0.5" filter="url(#b3)"/>
<path d="M343.5 192.9L343.5 204.7L346.2 212.9L349.2 223.1L357.4 226.2L367.6 230.3L377.8 231.3L391.1 231.3L391.1 239.4L390.1 251.7L391.1 259.9L390.1 272.1L390.1 281.3M391.1 251.7L400.3 256.8L398.3 265.0L406.4 269.1L412.6 270.1L410.5 279.3L417.7 281.3L417.7 289.5L424.8 295.6L433.0 302.8L442.2 304.8L444.2 313.0L440.1 317.1L436.0 322.2L432.0 331.4L430.9 341.6L425.8 345.7M442.2 313.0L453.4 324.2L459.5 331.4L465.7 331.4L471.8 325.2L473.8 321.1L484.0 317.1L494.3 320.1M465.7 331.4L472.8 339.5L472.8 347.7M329.8 194.5L339.0 194.9M424.2 343.1L430.3 342.0L432.3 352.3L436.4 359.4M418.0 354.3L409.9 361.4L403.7 368.6L397.6 375.7L391.5 380.9L389.4 389.0L385.4 405.4L380.3 410.5L374.1 421.7L378.2 431.9L381.3 440.1L385.4 446.2L381.3 456.4L387.4 470.7L386.4 483.0L384.3 492.2L393.5 499.3L387.4 509.5M385.4 445.2L391.5 446.2L403.7 447.2M473.2 340.0L472.2 350.2L468.1 362.5L466.0 372.7L471.1 384.9L476.3 393.1L486.5 396.2M473.2 350.2L481.4 362.5L487.5 376.8L495.7 387.0L501.8 395.1L506.9 400.3L503.8 409.4M506.9 400.3L514.0 409.4L528.3 407.4L536.5 409.4L544.7 415.6L554.9 423.7L556.9 436.0L560.0 440.1M514.0 409.4L519.1 421.7L521.2 425.8L519.1 438.0L516.1 448.3L512.0 456.4L507.9 470.7L515.1 478.9L512.0 489.1L503.8 499.3L497.7 509.5L493.6 517.7M521.2 423.7L526.3 424.8L532.4 434.0L536.5 442.1L535.5 450.3L544.7 458.5L552.9 464.6L560.0 472.8M507.9 474.8L497.7 476.9L489.5 483.0L481.4 487.1L475.2 492.2M481.4 487.1L471.1 487.1L467.1 484.0M452.8 484.0L450.7 497.3L442.6 505.4L442.6 513.6M493.6 372.7L507.9 366.6L524.3 359.4L539.6 353.3M468.6 359.2L465.5 371.5L470.6 383.7L475.7 394.0L487.0 396.0M507.4 400.1L512.5 410.3L519.7 408.3L529.9 407.2L542.1 413.4L554.4 423.6L556.4 434.8L562.6 445.0L565.6 452.2L576.9 459.3L580.9 467.5L586.0 475.7M519.7 422.6L521.7 428.7L517.6 443.0L512.5 457.3L508.4 467.5L513.5 475.7M525.8 424.6L534.0 436.9L536.0 443.0L540.1 452.2L548.3 461.4L555.4 469.5L557.4 475.7M483.9 317.4L494.1 320.4M509.4 463.1L508.4 470.2L513.5 475.3L517.6 479.4L514.6 484.5L510.5 490.6L505.4 498.8L500.3 506.0L495.1 514.1L494.1 525.4L497.2 531.5L502.3 537.6L502.3 549.9M506.4 475.3L497.2 477.4L489.0 483.5L479.8 485.5L474.7 491.7M479.8 485.5L467.6 484.5M453.3 484.5L449.2 497.8L443.1 506.0L444.1 513.1L447.1 521.3L449.2 529.4L457.4 534.6L462.5 541.7L464.5 547.8L460.4 556.0L457.4 561.1L461.4 563.1M549.3 462.0L556.4 470.2L557.4 476.3L559.5 490.6L562.6 498.8L567.7 506.0L570.7 515.1L568.7 525.4L569.7 535.6L571.7 541.7L569.7 551.9L562.6 557.0L552.3 564.2L549.3 570.3L548.3 576.4L557.4 578.5L554.4 582.6L562.6 585.6L562.6 590.7L558.5 595.8L561.5 603.0L570.7 612.2L564.6 617.3L562.6 621.4M579.9 462.0L580.9 469.2L586.0 478.4L591.1 485.5L592.2 490.6L596.3 497.8M524.8 588.7L520.7 596.9L505.4 600.9L501.3 606.0L493.1 607.1L489.0 612.2M534.0 588.7L546.2 592.8M541.1 617.3L536.0 623.4L529.9 625.4L523.7 633.6L518.6 636.7M549.3 625.4L554.4 631.6M449.7 498.4L443.6 504.5L438.5 511.7L431.3 520.9L435.4 528.0L432.3 533.1M442.6 509.6L446.6 520.9L448.7 530.0L458.9 535.1L464.0 545.4L460.9 555.6L456.9 561.7L460.9 563.7M456.9 561.7L446.6 571.9L431.3 584.2L426.2 590.3L427.2 598.5L431.3 602.6M424.2 538.2L421.1 543.3L423.1 551.5M515.1 483.1L511.0 490.2L504.9 498.4L499.7 506.6L493.6 516.8L495.7 529.0L501.8 538.2L502.8 551.5M534.6 648.2L521.4 649.2L516.3 655.3L516.3 660.4L512.2 668.6L506.0 669.6L503.0 661.4M506.0 668.6L497.9 667.6L497.9 671.7M491.7 678.8L482.6 678.8L471.3 679.8L465.2 681.9L458.0 684.9L452.9 687.0L443.7 688.0L439.7 690.0L433.5 686.6M440.7 690.0L427.4 694.1L424.3 701.3L426.4 705.4L424.3 715.6L418.2 723.7L410.0 730.9M444.8 700.3L449.9 705.4L451.9 707.4L448.9 714.6L448.9 719.7M449.9 739.1L452.9 738.7M539.7 659.4L543.8 656.3L550.0 656.3L552.0 662.5L556.1 668.6L553.0 672.7M565.3 671.7L572.4 674.7L580.6 677.8M572.4 674.7L571.4 682.9L569.4 690.0L566.3 697.2L567.3 703.3L562.2 706.4M498.9 737.0L510.1 735.0L517.3 731.9L525.4 727.8L530.6 732.9L537.7 736.0L539.7 740.1L535.7 745.2L533.6 748.3M539.7 738.0L545.9 738.0L553.0 734.0L553.0 723.7M555.1 742.1L556.1 748.3L557.1 754.4M590.3 686.0L594.4 692.1L598.5 698.2L597.4 706.4L599.5 713.5L603.6 721.7L612.8 723.7L623.0 723.3M632.2 728.9L632.2 734.0L634.2 738.0L633.2 742.1L630.1 752.3L626.0 758.5L624.0 764.6" stroke-width="8" stroke-opacity="0.5" filter="url(#b1)"/>
</g>
<path d="M408.5 435.5L407.8 432.8L407.0 431.2L407.7 427.6L406.6 424.8L407.3 422.9L406.6 419.8L407.0 417.9L407.8 415.0L407.4 411.5L408.7 409.3L409.2 406.0L409.9 403.7L410.4 401.9L409.0 398.1L408.9 396.3L408.0 393.5L406.1 392.0L405.6 388.5L406.8 386.7L407.4 384.2L409.4 381.7L410.1 379.6L412.4 377.4L413.7 375.1L415.8 373.1L417.3 371.2L420.8 368.6L422.1 366.6L424.6 364.2L427.8 362.8L429.0 361.0L431.5 360.5L433.6 357.7L437.2 358.7L438.5 360.2L441.9 360.9L444.5 361.0L447.2 362.8L447.5 364.3L449.9 367.4L451.2 369.2L453.0 371.7L455.0 375.3L455.3 377.2L457.2 379.0L458.4 382.6L458.7 384.1L460.5 386.7L460.8 389.7L462.7 391.1L463.1 393.4L464.7 396.7L466.5 398.9L467.8 401.1L467.9 402.8L470.6 405.8L470.7 407.3L472.6 409.5L473.8 411.3L474.9 414.3L475.5 416.0L478.3 419.3L479.5 421.4L480.6 424.1L482.0 425.0L480.9 428.1L480.3 430.9L479.4 434.6L478.8 436.3L478.0 439.3L478.0 441.8L477.8 444.8L478.3 447.2L480.5 449.5L480.2 451.9L481.4 453.8L481.5 456.6L482.6 459.9L483.3 462.4L483.8 465.7L482.3 466.6L479.2 467.5L476.0 468.4L473.7 469.0L471.3 469.7L468.5 470.7L466.1 472.5L464.1 474.1L461.2 475.1L460.2 476.3L457.5 478.1L454.7 480.3L452.4 481.4L449.7 481.8L448.3 483.9L444.4 485.4L442.5 487.4L441.3 484.2L442.1 482.5L440.2 479.4L439.9 477.5L439.7 475.4L439.4 472.4L438.6 470.3L438.1 467.4L437.5 465.3L437.1 462.0L435.2 459.7L433.2 458.6L430.9 457.2L429.2 454.3L427.7 452.9L425.6 450.1L423.5 448.2L422.1 445.9L419.7 444.3L417.9 441.8L415.9 441.2L412.9 439.0L409.9 437.2Z" fill="url(#gcp)" filter="url(#b1)"/>
<g fill="none" stroke="#000" stroke-linecap="round" stroke-linejoin="round"><path d="M472.2 350.2L468.1 362.5L466.0 372.7L471.1 384.9L476.3 393.1L486.5 396.2" stroke-width="26" stroke-opacity="0.45" filter="url(#b6)"/><path d="M472.2 350.2L468.1 362.5L466.0 372.7L471.1 384.9L476.3 393.1L486.5 396.2" stroke-width="10" stroke-opacity="0.5" filter="url(#b3)"/></g>
<path d="M376.2 210.0L379.2 207.9L382.0 207.1L384.1 206.7L386.5 204.5L387.9 204.4L389.7 202.4L393.0 202.5L396.1 202.3L397.9 202.0L400.3 200.7L403.0 199.8L405.0 199.6L407.4 199.5L410.4 198.2L411.9 197.4L415.1 197.2L418.1 197.2L421.5 196.1L421.2 199.3L422.6 201.9L422.4 205.6L424.6 205.7L428.6 207.4L430.5 207.2L432.6 211.2L433.9 214.7L433.0 217.1L430.8 220.1L428.5 219.6L425.1 218.3L423.0 218.2L419.8 217.6L417.5 215.0L414.5 215.0L411.7 214.3L408.7 213.2L407.5 213.1L404.7 212.0L401.9 213.6L399.1 214.7L397.1 216.2L394.7 216.3L391.5 216.8L389.5 216.6L385.4 216.5L383.0 217.3L380.1 217.1L377.6 212.4Z" fill="url(#gtb)" filter="url(#b1)"/>
<path d="M345.6 251.4L347.0 248.9L347.7 246.2L349.1 244.7L351.4 241.2L353.9 240.8L356.0 241.1L359.6 240.7L362.1 239.6L364.5 238.2L368.3 239.0L369.8 240.3L373.0 240.6L375.1 242.8L377.4 244.0L379.5 244.4L381.5 246.9L382.1 250.8L383.7 253.4L384.6 255.3L384.2 258.1L384.7 261.1L383.5 263.6L383.0 266.8L380.6 265.1L377.9 265.2L376.1 263.0L373.6 261.9L371.5 260.3L369.9 259.6L366.2 261.0L363.3 261.1L361.6 261.7L358.1 263.7L355.8 263.4L353.1 260.2L351.1 258.6L348.8 256.5L347.2 253.3Z" fill="#6e6e6e" filter="url(#b1)"/>
<path d="M510.4 490.0L513.2 488.2L515.9 486.7L517.4 484.1L520.6 483.4L523.9 482.7L526.2 482.7L528.7 482.5L531.7 481.7L534.4 482.0L536.5 482.5L538.5 484.6L541.2 485.1L543.2 485.8L546.0 486.6L547.5 488.3L549.2 491.0L550.5 494.3L552.4 496.2L555.0 499.2L556.2 501.8L556.2 503.4L557.3 506.4L559.5 508.4L560.4 511.3L561.2 513.4L561.7 516.3L561.7 518.7L561.3 522.6L562.6 525.0L561.8 526.7L561.6 529.8L561.4 532.9L560.6 535.7L561.1 538.3L561.1 541.8L558.8 542.9L556.3 545.3L554.1 545.8L552.9 548.7L550.0 549.1L548.4 550.9L544.7 551.1L542.3 552.8L540.0 553.8L538.4 553.3L535.8 553.3L533.3 553.5L530.0 551.8L528.5 551.8L527.0 549.7L525.1 547.3L523.4 544.2L521.0 542.0L520.1 539.7L519.3 537.0L517.5 534.8L515.9 534.0L513.7 531.6L513.3 529.7L511.0 527.0L508.7 525.1L509.1 521.8L508.6 518.7L509.0 516.4L508.0 512.7L508.7 510.0L509.6 506.7L508.9 504.5L508.9 501.0L509.4 498.8L510.0 496.2L509.7 493.5Z" fill="url(#gep)" filter="url(#b1)"/>
<path d="M536.2 427.6L539.0 426.9L540.5 424.8L543.4 423.4L545.5 422.2L547.8 424.9L550.2 426.0L552.1 428.6L554.2 430.2L554.7 432.4L557.2 436.0L556.8 438.4L559.2 440.6L558.9 443.0L560.4 444.9L561.6 447.1L563.2 450.6L563.8 453.5L564.8 454.8L565.7 456.7L566.9 459.8L569.7 461.0L570.2 463.6L569.2 466.1L566.1 467.9L565.1 469.9L562.3 471.1L561.0 469.2L558.3 467.6L556.2 466.0L554.0 462.7L552.4 461.6L550.8 459.6L548.9 458.0L546.2 455.2L544.4 452.5L543.9 449.7L542.8 447.3L541.2 446.2L539.4 442.2L538.6 439.8L537.7 436.7L536.5 435.4L536.5 431.1Z" fill="#6c6c6c" filter="url(#b3)"/>
<path d="M522.4 434.0L525.1 432.6L527.2 431.6L530.1 431.2L531.4 432.9L531.2 436.1L532.5 438.7L532.8 441.0L533.8 444.3L535.7 447.7L536.6 450.2L537.8 452.0L538.5 453.5L539.3 456.8L539.8 459.1L541.8 461.3L540.5 463.4L539.2 466.7L537.8 468.0L538.0 470.8L536.2 473.5L535.8 475.8L533.2 475.7L530.8 475.5L527.4 475.1L526.0 475.7L522.1 476.2L521.6 472.3L521.4 469.8L520.7 467.6L519.6 464.9L518.7 462.1L518.8 458.6L518.8 455.9L519.2 454.5L519.7 451.5L520.4 447.8L521.1 446.1L520.0 443.5L521.2 439.4L522.8 437.0Z" fill="#555555" filter="url(#b3)"/>
<use href="#cb" transform="translate(11 9)"/><use href="#cw" transform="translate(-8 13)" opacity="0.6"/>
</g>
<path d="M355.9 263.2L358.0 262.5L358.9 262.5L360.5 262.4L363.0 261.2L366.0 260.9L368.4 260.7L370.4 260.0L372.5 261.8L373.1 262.8L375.5 264.1L378.2 265.4L379.1 265.7L381.2 268.9L381.9 269.2L382.5 271.3L383.2 274.8L383.2 277.1L383.3 277.8L381.3 280.2L381.6 282.5L379.1 283.4L377.5 286.2L376.0 286.9L374.6 288.4L373.1 288.6L372.5 290.6L372.1 293.2L372.6 293.6L371.4 295.9L371.7 299.4L372.3 299.8L370.2 303.4L370.4 304.6L369.2 306.2L369.1 308.7L368.4 311.2L366.6 312.8L366.6 316.2L367.2 316.8L366.1 319.6L366.5 322.3L364.0 321.9L360.8 322.3L359.1 321.2L357.3 321.9L354.5 319.0L353.7 318.0L350.8 317.3L348.8 316.2L347.2 316.1L346.1 313.4L343.2 314.0L341.8 313.2L339.3 312.1L336.7 310.5L335.7 310.5L334.2 308.8L331.1 307.8L330.1 306.1L328.1 304.5L328.4 302.6L327.9 300.4L329.0 299.7L329.8 296.4L329.9 294.1L330.8 291.8L330.7 291.3L332.2 288.4L333.0 286.0L333.5 283.5L334.9 282.0L337.0 280.4L338.7 277.9L339.9 276.4L340.2 274.2L343.3 274.5L344.9 272.7L346.7 271.5L347.7 269.4L351.1 267.6L351.5 265.7L353.0 264.9Z" fill="url(#gnw)"/>
<path d="M483.8 421.1L485.2 420.4L487.7 421.1L489.8 419.1L492.0 420.7L493.8 419.0L496.3 420.7L497.4 419.3L499.1 420.1L502.5 422.2L504.7 423.2L505.3 425.8L507.7 426.6L509.5 428.0L510.1 429.7L510.3 432.2L511.2 433.9L511.9 435.5L511.9 437.1L510.8 440.2L508.9 441.2L506.1 444.6L503.5 445.4L502.6 448.1L503.3 450.5L506.0 452.7L508.0 454.6L508.0 456.7L508.1 458.1L508.4 460.0L506.3 461.5L504.4 461.2L502.3 463.0L499.7 462.1L497.7 464.1L494.9 462.9L493.6 464.9L492.1 464.6L490.5 464.6L488.0 464.5L484.5 464.9L483.5 463.2L483.5 460.2L483.3 458.2L481.0 455.4L481.5 454.5L479.7 450.4L479.2 448.8L477.9 447.2L475.5 444.9L476.9 442.6L476.9 440.9L477.9 438.8L479.1 437.0L481.2 435.7L480.8 432.7L481.9 431.1L483.3 428.1L482.2 425.3L482.6 423.6Z" fill="#fff"/>
</g>
<path d="M343.1 192.5L343.9 199.0L343.2 205.4L344.4 208.9L345.7 213.4L348.2 217.7L349.6 223.6L353.0 224.4L357.4 226.7L362.0 228.5L367.8 230.2L372.8 231.3L377.4 231.8L382.1 231.7L387.2 230.8L391.6 232.0L390.8 234.7L390.6 240.1L390.1 244.1L389.9 247.9L389.5 251.2L390.9 255.2L390.9 260.5L391.1 264.5L391.1 267.4L389.7 272.5L390.4 276.1L390.1 281.3M391.1 251.3L395.6 253.7L399.6 257.5L399.0 261.4L397.7 265.0L401.8 266.9L406.0 269.3L412.1 270.4L411.5 274.1L410.3 279.3L418.2 281.1L417.3 286.1L418.2 289.8L420.9 292.1L424.5 295.0L428.3 299.2L432.9 302.8L437.4 303.1L442.4 305.0L443.3 309.0L444.5 313.7L440.7 317.4L435.9 321.9L433.9 327.4L431.8 331.2L431.3 336.0L431.6 340.9L425.8 345.7M442.3 313.6L445.6 316.9L449.5 320.1L453.0 323.7L456.9 328.2L460.1 330.7L465.9 331.1L468.9 328.4L471.5 325.9L473.1 321.5L479.4 319.1L484.2 317.8L488.8 318.8L494.3 320.1M466.0 331.2L469.5 335.3L472.8 339.7L473.1 343.4L472.8 347.7M330.0 194.6L334.0 194.9L339.0 194.9M423.8 343.6L430.3 342.4L431.4 347.1L432.0 351.8L435.0 355.9L436.4 359.4M418.1 354.3L414.4 357.5L409.4 361.9L406.8 365.2L404.2 369.1L401.2 371.5L397.5 376.2L391.9 380.3L390.0 384.6L388.9 388.8L388.9 393.1L387.3 396.6L386.2 402.0L385.6 405.3L380.2 410.9L378.6 413.7L376.4 417.8L374.2 421.3L376.0 426.6L378.0 431.2L379.3 436.1L380.7 439.6L385.7 445.9L383.1 451.0L381.7 455.9L383.5 461.7L384.9 465.8L387.8 470.9L386.9 474.2L386.6 478.7L386.7 482.7L385.2 487.8L384.8 492.0L388.8 495.9L394.1 498.9L391.1 504.7L387.4 509.5M385.2 445.4L391.3 445.6L395.9 446.4L399.7 446.9L403.7 447.2M473.8 340.4L472.0 345.2L472.1 350.2L471.3 354.2L469.4 358.9L468.0 362.5L467.1 368.0L466.3 373.0L467.6 376.1L469.7 380.9L471.5 385.3L473.2 388.6L475.7 393.6L480.8 394.1L486.5 396.2M473.5 350.3L475.3 354.6L478.9 358.4L480.7 362.7L483.3 367.4L486.1 372.4L488.0 376.3L490.0 380.2L492.2 384.3L495.3 386.6L498.5 390.7L502.3 395.2L506.9 400.1L504.7 404.6L503.8 409.4M507.4 400.7L511.0 404.5L513.6 408.8L518.9 408.6L523.5 408.1L528.5 407.2L532.8 408.0L537.1 409.5L540.0 412.3L544.7 415.4L548.2 418.1L551.2 421.4L554.6 424.0L556.0 428.0L556.2 432.5L556.9 436.5L560.0 440.1M513.4 409.4L515.9 412.9L518.0 417.0L519.3 421.3L521.8 425.9L520.9 429.9L520.1 434.2L518.9 437.6L518.1 442.7L516.7 447.8L513.5 451.8L512.4 457.1L510.5 461.4L508.9 466.5L508.2 470.2L510.9 475.1L514.4 479.4L513.2 483.6L512.1 488.9L509.4 492.0L507.1 495.7L504.3 498.8L501.2 505.1L497.6 508.9L495.5 513.8L493.6 517.7M520.8 423.8L525.7 424.7L529.7 429.3L532.7 433.4L534.9 437.5L537.1 442.8L536.6 446.2L535.2 450.1L538.9 453.0L542.2 455.2L544.7 459.0L548.9 461.6L552.3 464.1L556.1 469.2L560.0 472.8M508.4 474.4L503.4 475.2L497.8 477.5L493.4 480.5L489.8 482.3L485.2 485.0L481.0 487.4L475.2 492.2M480.9 487.5L476.0 486.5L471.2 486.5L467.1 484.0M452.8 484.4L452.2 488.4L450.8 492.9L450.2 497.5L446.1 501.5L442.3 505.3L442.8 509.1L442.6 513.6M493.2 373.3L498.1 371.1L503.7 368.6L507.4 366.0L512.5 364.2L516.1 363.0L519.6 361.1L523.8 359.5L528.1 357.7L531.5 356.2L535.3 354.3L539.6 353.3M468.2 359.8L467.6 363.9L465.9 368.0L465.5 371.9L467.3 375.8L468.6 380.0L470.2 383.4L472.5 388.7L475.8 393.7L481.9 394.4L487.0 396.0M507.5 399.7L510.1 405.6L512.8 409.7L519.3 408.4L525.4 407.1L530.0 407.5L534.4 409.1L538.5 411.3L542.7 412.7L546.8 416.6L550.2 419.6L554.0 423.9L555.7 428.7L556.2 434.3L559.1 439.5L562.3 445.7L566.3 452.6L569.3 454.5L573.5 457.5L577.2 459.5L578.5 463.6L581.4 467.9L582.9 471.9L586.0 475.7M519.4 422.1L522.4 428.9L520.7 432.9L519.4 438.8L518.2 443.3L516.4 448.2L514.3 452.4L513.0 457.7L511.0 462.1L509.1 467.5L511.6 471.0L513.5 475.7M526.4 425.0L528.2 429.2L530.9 432.3L533.9 436.5L536.0 443.6L538.3 447.9L539.9 452.6L543.2 455.5L546.2 458.8L548.1 460.8L552.0 465.9L555.2 469.7L557.4 475.7M484.4 317.8L488.3 318.9L494.1 320.4M508.8 462.5L508.9 470.1L513.7 475.3L517.4 479.0L514.3 485.0L510.6 490.3L507.3 494.4L505.6 498.7L503.0 502.8L499.7 506.2L497.1 510.5L494.7 513.8L495.3 519.6L493.7 525.9L497.3 532.0L502.1 537.6L502.9 541.7L503.0 545.4L502.3 549.9M506.8 474.8L501.8 475.6L496.7 478.0L493.0 480.9L488.7 483.3L483.9 484.6L480.3 485.6L474.7 491.7M479.7 486.1L476.3 485.4L471.1 485.0L467.6 484.5M453.2 485.2L451.7 489.2L450.7 493.2L449.2 498.0L446.7 501.9L442.9 506.6L443.5 513.6L445.9 517.3L447.1 521.6L448.7 525.7L449.5 528.8L453.0 531.5L458.0 535.1L459.4 538.3L462.6 541.1L464.4 548.2L462.7 551.6L460.8 555.7L457.4 561.0L461.4 563.1M549.9 462.3L553.3 466.4L556.3 470.9L557.7 476.6L557.8 480.6L558.9 486.3L559.9 490.4L560.5 494.7L563.1 498.3L565.4 501.9L567.4 505.3L568.9 510.4L571.4 515.8L569.3 520.0L569.3 524.9L568.9 530.4L569.2 535.2L571.6 541.5L571.4 546.5L569.3 552.5L566.1 554.9L562.7 557.4L558.9 558.9L556.1 561.7L552.4 564.4L549.6 570.0L548.1 577.0L552.9 577.2L557.6 578.1L554.8 581.9L558.9 584.2L562.3 586.2L562.2 590.4L557.9 595.9L561.9 603.2L564.5 606.5L567.1 608.8L570.9 612.8L564.8 617.5L562.6 621.4M580.3 461.9L581.6 469.5L583.3 473.6L586.5 478.2L588.2 482.5L591.2 485.6L592.4 491.2L593.7 494.0L596.3 497.8M524.2 588.6L522.7 593.3L520.9 597.0L515.4 598.3L510.2 600.1L505.8 601.4L500.8 606.3L497.5 606.6L493.7 607.6L489.0 612.2M534.3 589.1L538.3 590.6L541.6 591.7L546.2 592.8M541.4 617.4L535.7 622.8L530.0 625.9L526.5 629.1L523.4 633.0L518.6 636.7M549.5 626.1L554.4 631.6M450.1 498.2L446.9 500.8L444.0 504.3L440.3 508.3L438.0 511.3L434.3 516.2L431.4 521.3L432.7 524.9L434.9 527.6L432.3 533.1M442.7 509.4L444.4 515.3L446.2 521.3L447.3 525.9L449.1 530.1L453.1 533.0L458.2 535.2L461.3 539.6L464.2 545.7L462.6 550.3L461.0 555.7L456.5 562.2L460.9 563.7M457.5 562.1L454.1 564.9L450.7 567.9L446.6 571.4L442.7 575.2L439.3 578.0L434.9 580.7L431.2 583.9L425.8 590.6L426.7 594.3L426.8 598.8L431.3 602.6M423.7 537.9L421.2 543.6L422.8 547.8L423.1 551.5M515.7 483.7L513.3 486.9L510.4 489.8L507.2 494.8L505.2 498.6L502.0 502.3L499.3 506.7L497.4 511.4L493.0 516.3L494.1 521.4L495.4 524.9L495.1 528.5L498.2 534.0L501.7 538.9L502.7 543.1L502.4 547.5L502.8 551.5M534.1 647.6L530.3 648.5L525.4 648.5L520.7 649.8L516.5 655.9L516.9 660.3L514.5 664.3L512.6 669.1L505.5 668.9L504.1 665.7L503.0 661.4M505.9 667.9L502.4 668.5L497.8 666.9L497.9 671.7M492.3 678.9L486.5 678.6L482.7 679.3L476.9 679.5L470.9 679.5L465.8 681.7L457.5 685.1L452.4 686.6L448.3 687.6L443.9 688.3L439.6 689.4L433.5 686.6M441.0 689.4L436.2 691.3L432.1 693.1L427.0 694.3L424.6 701.2L425.9 705.9L425.5 709.9L424.0 716.3L420.9 719.5L418.6 724.2L414.3 727.7L410.0 730.9M444.1 699.7L450.5 705.8L451.3 706.8L448.5 715.2L448.9 719.7M449.5 739.3L452.9 738.7M540.3 659.6L544.4 656.0L549.5 655.7L552.4 661.9L556.7 668.9L553.0 672.7M564.8 672.1L572.0 674.7L576.0 676.7L580.6 677.8M573.0 675.3L571.2 679.3L571.5 683.3L569.4 690.2L566.4 697.6L566.7 702.7L562.2 706.4M499.0 736.7L504.4 735.3L510.5 734.3L517.7 732.4L521.3 729.3L525.7 727.4L530.5 732.4L538.4 736.1L539.5 739.5L536.0 745.7L533.6 748.3M540.2 737.5L545.7 737.8L549.8 735.5L553.2 734.6L553.4 728.2L553.0 723.7M554.5 741.6L556.4 748.4L557.1 754.4M590.3 685.9L594.3 692.2L598.7 698.8L598.3 702.7L598.0 706.9L599.8 712.9L601.8 718.1L603.5 722.2L607.7 723.3L612.7 724.0L617.5 723.3L623.0 723.3M632.0 728.6L631.6 733.9L634.9 738.3L633.8 742.5L632.1 747.9L630.5 752.0L625.7 758.3L624.0 764.6" fill="none" stroke="#fff" stroke-width="1.1" stroke-dasharray="1 2.6 1 4.1 1 3.3 1 5.2 1 2.9" shape-rendering="crispEdges"/>
<circle cx="343.5" cy="192.7" r="4.3" fill="#fff"/>
<text x="348.6" y="189" font-size="8" font-weight="bold" fill="#fff" textLength="39.5" lengthAdjust="spacingAndGlyphs" font-family="Liberation Sans, sans-serif">Roermond</text>
<circle cx="558" cy="199.7" r="4.3" fill="#fff"/>
<text x="563" y="197" font-size="8" font-weight="bold" fill="#fff" textLength="68.5" lengthAdjust="spacingAndGlyphs" font-family="Liberation Sans, sans-serif">Mönchengladbach</text>
<circle cx="681" cy="201.2" r="4.3" fill="#fff"/>
<text x="653.5" y="197.7" font-size="8" font-weight="bold" fill="#fff" textLength="22.8" lengthAdjust="spacingAndGlyphs" font-family="Liberation Sans, sans-serif">Neuss</text>
<circle cx="722" cy="181.7" r="4.3" fill="#fff"/>
<text x="677.1" y="192.4" font-size="8" font-weight="bold" fill="#fff" textLength="40" lengthAdjust="spacingAndGlyphs" font-family="Liberation Sans, sans-serif">Düsseldorf</text>
<circle cx="328.5" cy="425.7" r="4.3" fill="#fff"/>
<text x="333.8" y="422.8" font-size="8" font-weight="bold" fill="#fff" textLength="27.4" lengthAdjust="spacingAndGlyphs" font-family="Liberation Sans, sans-serif">Heerlen</text>
<circle cx="376.5" cy="513.2" r="4.3" fill="#fff"/>
<text x="382.2" y="509.6" font-size="8" font-weight="bold" fill="#fff" textLength="27.4" lengthAdjust="spacingAndGlyphs" font-family="Liberation Sans, sans-serif">Aachen</text>
<text x="626.4" y="572.8" font-size="9" fill="#f0f0f0" textLength="65.7" lengthAdjust="spacingAndGlyphs" font-family="Liberation Sans, sans-serif">Distance to river</text>
<rect x="626.2" y="578.5" width="10.3" height="108.5" fill="url(#lg)"/>
<text x="641.7" y="586.5" font-size="9" fill="#f0f0f0" textLength="24.5" lengthAdjust="spacingAndGlyphs" font-family="Liberation Sans, sans-serif">40 km</text>
<text x="641.7" y="685.7" font-size="9" fill="#f0f0f0" textLength="19.4" lengthAdjust="spacingAndGlyphs" font-family="Liberation Sans, sans-serif">0 km</text>
<path d="M347.8 669l11 28-11-11-10.800 11z" fill="#fff"/><path d="M347.8 669v17l-10.800 11z" fill="#e0e0e0"/>
</svg>
</div>
<div id="panel" class="abs">
<div class="abs" style="left:0;top:24px;width:397px;height:1px;background:#c9c9c9"></div>
<div class="tab sel" style="left:6px;top:2px;width:52px;height:23px;line-height:23px;">Items</div>
<div class="tab" style="left:58px;top:4px;width:85px;height:20px;line-height:21px;">Undo History</div>
<span class="abs" style="left:10px;top:29px;font-size:12px">Items</span>
<svg class="abs" style="left:369px;top:30px" width="26" height="12" viewBox="0 0 26 12"><rect x="0.500" y="0.500" width="10" height="10" rx="2" fill="#e6e6e6" stroke="#7a7a7a"/><rect x="4.500" y="2.500" width="4" height="4" fill="#f4f4f4" stroke="#444" stroke-width="0.900"/><rect x="2.500" y="4.500" width="4" height="4" fill="#f4f4f4" stroke="#444" stroke-width="0.900"/><rect x="14.500" y="0.500" width="10" height="10" rx="2" fill="#e6e6e6" stroke="#7a7a7a"/><path d="M17 3l5 5M22 3l-5 5" stroke="#222" stroke-width="1.700"/></svg>
<div class="abs" style="left:6px;top:45px;width:390px;height:100px;box-sizing:border-box;border:1px solid #828790;background:#fff;"></div>
<div class="abs" style="left:7px;top:46px;width:388px;height:19px;background:linear-gradient(#fff,#f1f1f1);border-bottom:1px solid #d0d0d0;"></div>
<div class="abs" style="left:42px;top:46px;width:1px;height:19px;background:#dadada"></div>
<div class="abs" style="left:78px;top:46px;width:1px;height:19px;background:#dadada"></div>
<svg class="abs" style="left:9px;top:50px" width="16" height="12" viewBox="0 0 16 12"><path d="M0.500 6c3-5.500 12-5.500 15 0-3 5.500-12 5.500-15 0z" fill="#f4f4f4" stroke="#9a9a9a" stroke-width="0.900"/><circle cx="8" cy="6" r="3.300" fill="#bdbdbd" stroke="#8a8a8a" stroke-width="0.700"/><circle cx="8" cy="6" r="1.500" fill="#555"/></svg>
<svg class="abs" style="left:46px;top:48px" width="14" height="16" viewBox="0 0 14 16"><path d="M3.500 8V5.500a3.500 3.500 0 0 1 7 0V8" fill="none" stroke="#9a9a9a" stroke-width="1.600"/><rect x="1" y="7.500" width="12" height="8" rx="1.500" fill="#5b5b5b"/></svg>
<span class="abs" style="left:81px;top:49px;font-size:12px">Item</span>
<!-- rows -->
<div class="cb" style="left:10px;top:68px"></div><svg class="ck" style="left:12px;top:70px" width="10" height="10" viewBox="0 0 10 10"><path d="M1.200 5.200l2.600 3L8.600 1.500" fill="none" stroke="#000" stroke-width="1.700"/></svg>
<div class="cb" style="left:46px;top:68px"></div>
<svg class="abs" style="left:83px;top:68px" width="14" height="12" viewBox="0 0 14 12"><rect x="0.500" y="0.500" width="13" height="10.500" fill="#ececec" stroke="#a0a0a0"/><path d="M1 1h12v7c-3-3.500-8-4.500-12-3.500z" fill="#3c3c3c"/></svg>
<span class="abs" style="left:104px;top:67px;font-size:12px;letter-spacing:0.1px">North Arrow</span>
<div class="cb" style="left:10px;top:86px"></div><svg class="ck" style="left:12px;top:88px" width="10" height="10" viewBox="0 0 10 10"><path d="M1.200 5.200l2.600 3L8.600 1.500" fill="none" stroke="#000" stroke-width="1.700"/></svg>
<div class="cb" style="left:46px;top:86px"></div>
<svg class="abs" style="left:83px;top:86px" width="14" height="14" viewBox="0 0 14 14"><rect x="0.700" y="0.700" width="3" height="3" fill="#fff" stroke="#444" stroke-width="0.900"/><rect x="0.700" y="5.500" width="3" height="3" fill="#fff" stroke="#444" stroke-width="0.900"/><rect x="0.700" y="10.300" width="3" height="3" fill="#fff" stroke="#444" stroke-width="0.900"/><path d="M5.500 2.200h5M5.500 7h8M5.500 11.800h3.500" stroke="#b0b0b0" stroke-width="1.300"/></svg>
<span class="abs" style="left:104px;top:85px;font-size:12px;letter-spacing:0.1px">&lt;Legend&gt;</span>
<div class="cb" style="left:10px;top:104px"></div><svg class="ck" style="left:12px;top:106px" width="10" height="10" viewBox="0 0 10 10"><path d="M1.200 5.200l2.600 3L8.600 1.500" fill="none" stroke="#000" stroke-width="1.700"/></svg>
<div class="cb" style="left:46px;top:104px"></div>
<svg class="abs" style="left:83px;top:104px" width="14" height="13" viewBox="0 0 14 13"><defs><linearGradient id="mg" x1="0" y1="0" x2="1" y2="0"><stop offset="0" stop-color="#bdbdbd"/><stop offset="1" stop-color="#f0f0f0"/></linearGradient></defs><path d="M1 0.500c1 0 1.500 0.500 1.500 1.200h11v10.800H2c-1 0-1.500-0.700-1.500-1.500V1.500c0-0.700 0.200-1 0.500-1z" fill="url(#mg)" stroke="#8a8a8a" stroke-width="0.900"/></svg>
<span class="abs" style="left:104px;top:103px;font-size:12px;letter-spacing:0.1px">Map 1</span>
<!-- splitter dots -->
<div class="abs" style="left:193px;top:147px;width:17px;height:2px;background-image:radial-gradient(circle,#b8b8b8 0.600px,transparent 0.800px);background-size:3px 3px;"></div>
<div class="abs" style="left:2px;top:355px;width:2px;height:17px;background-image:radial-gradient(circle,#b8b8b8 0.600px,transparent 0.800px);background-size:3px 3px;"></div>
<div class="abs" style="left:0;top:175px;width:397px;height:1px;background:#c9c9c9"></div>
<div class="tab" style="left:6px;top:155px;width:57px;height:20px;line-height:21px;">Layout</div>
<div class="tab sel" style="left:63px;top:152px;width:99px;height:24px;line-height:24px;">Item Properties</div>
<div class="tab" style="left:162px;top:155px;width:55px;height:20px;line-height:21px;">Guides</div>
<span class="abs" style="left:10px;top:180px;font-size:12px">Item Properties</span>
<svg class="abs" style="left:369px;top:181px" width="26" height="12" viewBox="0 0 26 12"><rect x="0.500" y="0.500" width="10" height="10" rx="2" fill="#e6e6e6" stroke="#7a7a7a"/><rect x="4.500" y="2.500" width="4" height="4" fill="#f4f4f4" stroke="#444" stroke-width="0.900"/><rect x="2.500" y="4.500" width="4" height="4" fill="#f4f4f4" stroke="#444" stroke-width="0.900"/><rect x="14.500" y="0.500" width="10" height="10" rx="2" fill="#e6e6e6" stroke="#7a7a7a"/><path d="M17 3l5 5M22 3l-5 5" stroke="#222" stroke-width="1.700"/></svg>
</div>

<div id="status" class="abs">
<span style="left:785px">x: 237.591 mm</span>
<span style="left:891px">y: 237.137 mm</span>
<span style="left:997px">page: 1</span>
<div class="abs" style="left:1103px;top:3px;width:107px;height:22px;box-sizing:border-box;border:1px solid #adadad;border-radius:2px;background:#fff;"><span style="left:4px;top:4px;position:absolute">68.5%</span><div class="abs" style="left:86px;top:0;width:1px;height:19px;background:#d0d0d0"></div><svg class="abs" style="left:92px;top:7px" width="9" height="5"><path d="M0 0h8l-4 4.5z" fill="#5a5a5a"/></svg></div>
<div class="abs" style="left:1219px;top:11px;width:97px;height:4px;box-sizing:border-box;border:1px solid #b9b9b9;background:#e7e7e7;border-radius:2px"></div>
<div class="abs" style="left:1218px;top:11px;width:6px;height:4px;background:#2a7de1;border-radius:2px"></div>
<div class="abs" style="left:1223px;top:7px;width:12px;height:13px;box-sizing:border-box;border:1px solid #9a9a9a;border-radius:3px;background:#fff"></div>
</div>

<svg class="abs" style="left:0;top:0;pointer-events:none" width="1342" height="881" viewBox="0 0 1342 881"><defs><linearGradient id="wl" x1="0" y1="0" x2="0" y2="1"><stop offset="0" stop-color="#a8a8a8"/><stop offset="0.045" stop-color="#a0a0a0"/><stop offset="0.075" stop-color="#111"/><stop offset="1" stop-color="#000"/></linearGradient></defs><rect x="0" y="0" width="1342" height="1" fill="#a8a8a8"/><rect x="0" y="0" width="1" height="881" fill="url(#wl)"/><rect x="0" y="880" width="1342" height="1" fill="#3a3a3a"/><rect x="1341" y="0" width="1" height="881" fill="#cdcdcd"/><path d="M0 0h9a8 8 0 0 0-8 8v1H0z" fill="#e4e4e4"/><path d="M1 9a8 8 0 0 1 8-8" fill="none" stroke="#a8a8a8" stroke-width="1"/><path d="M1342 0h-9a8 8 0 0 1 8 8v1h1z" fill="#e4e4e4"/><path d="M1341 9a8 8 0 0 0-8-8" fill="none" stroke="#a8a8a8" stroke-width="1"/><path d="M0 881h9a8 8 0 0 1-8-8v-1H0z" fill="#000"/><path d="M1342 881h-9a8 8 0 0 0 8-8v-1h1z" fill="#555"/><path d="M1338 868h1v1h-1zM1335 871h1v1h-1zM1338 871h1v1h-1zM1332 874h1v1h-1zM1335 874h1v1h-1zM1338 874h1v1h-1zM1329 877h1v1h-1zM1332 877h1v1h-1zM1335 877h1v1h-1z" fill="#a0a0a0"/></svg>
</body></html>
